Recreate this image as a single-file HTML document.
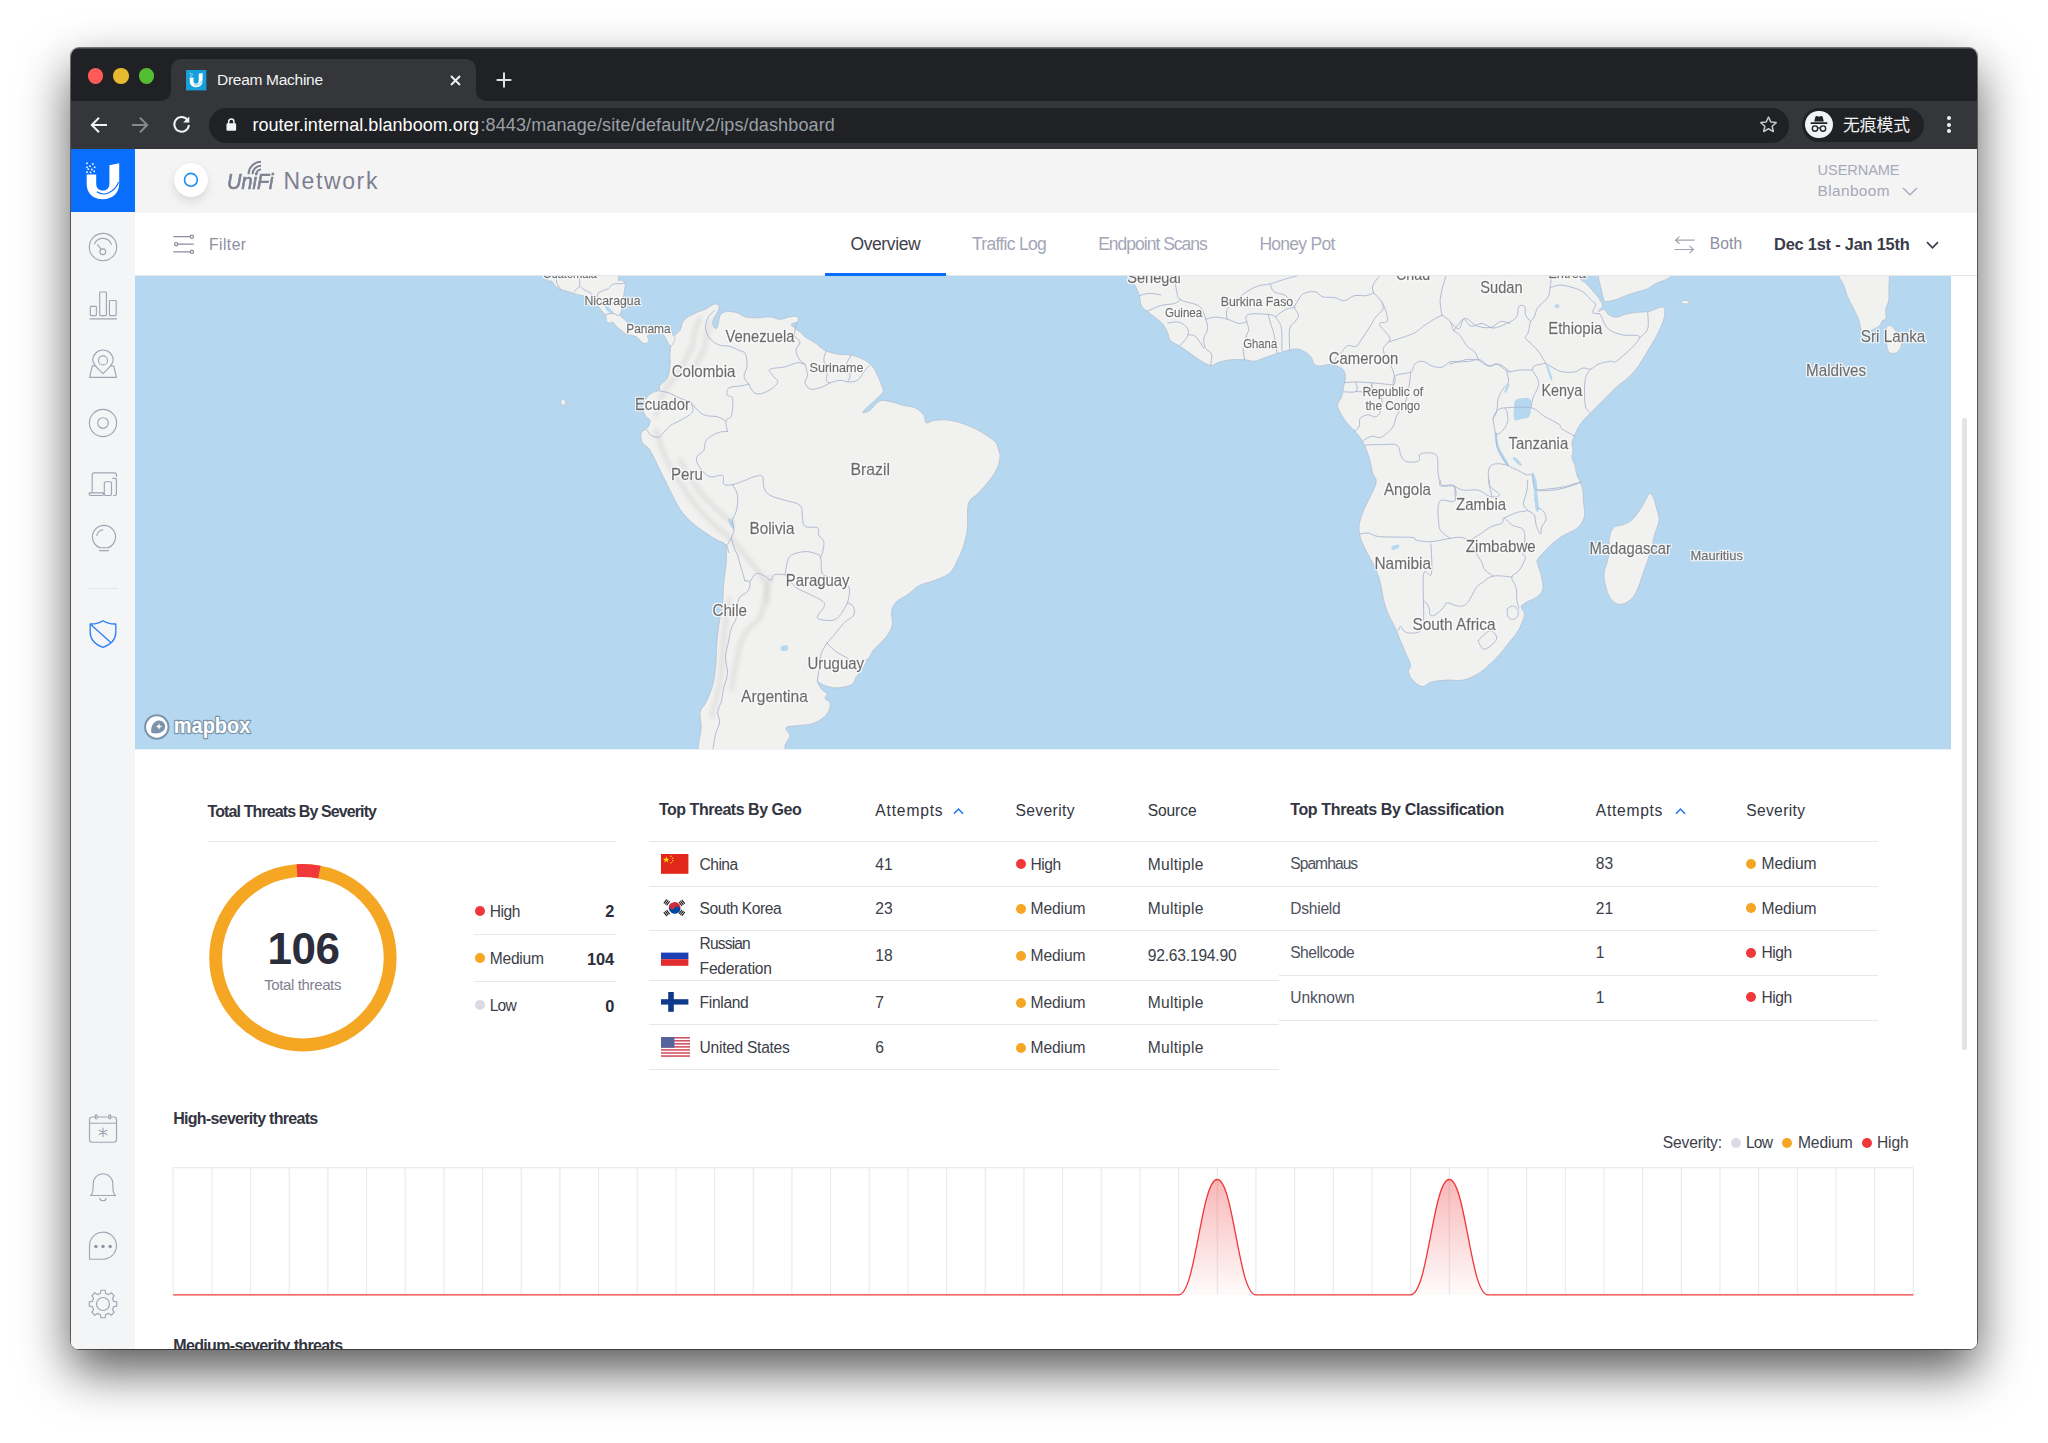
<!DOCTYPE html>
<html lang="en"><head><meta charset="utf-8"><title>Dream Machine</title>
<style>
html,body{margin:0;padding:0;}
body{width:2048px;height:1443px;background:#fff;position:relative;overflow:hidden;
 font-family:"Liberation Sans","Noto Sans CJK SC",sans-serif;}
.t{position:absolute;white-space:nowrap;line-height:1;display:block;}
#win{position:absolute;left:71px;top:47.5px;width:1906px;height:1301.5px;border-radius:8px 8px 7px 7px;
 overflow:hidden;background:#fff;}
#shadow{position:absolute;left:71px;top:47.5px;width:1906px;height:1301.5px;border-radius:8px;
 box-shadow:0 0 0 1px rgba(0,0,0,.5),0 22px 50px rgba(0,0,0,.66);}
#pg{position:absolute;left:-71px;top:-47.5px;width:2048px;height:1443px;}
svg{position:absolute;overflow:visible;}
.mf text{font-family:"Liberation Sans",sans-serif;fill:#6a6a6a;stroke:#6a6a6a;stroke-width:.35px;}
</style></head><body>
<div id="shadow"></div>
<div id="win"><div id="pg">

<div style="position:absolute;left:71.0px;top:47.5px;width:1906.0px;height:53.5px;background:#202124;"></div>
<div style="position:absolute;left:71.0px;top:101.0px;width:1906.0px;height:47.5px;background:#35363a;"></div>
<div style="position:absolute;left:71.0px;top:47.5px;width:1906.0px;height:1.4px;background:#48494c;"></div>
<div style="position:absolute;left:170.500px;top:58.500px;width:305.500px;height:43px;background:#35363a;border-radius:10px 10px 0 0;"></div>
<svg style="left:160.500px;top:91px" width="10" height="10" viewBox="0 0 10 10"><path d="M10 0 V10 H0 A10 10 0 0 0 10 0Z" fill="#35363a"/></svg>
<svg style="left:476px;top:91px" width="10" height="10" viewBox="0 0 10 10"><path d="M0 0 V10 H10 A10 10 0 0 1 0 0Z" fill="#35363a"/></svg>
<div style="position:absolute;left:87.6px;top:68.4px;width:15.6px;height:15.6px;background:#fc5b57;border-radius:50%;"></div>
<div style="position:absolute;left:113.0px;top:68.4px;width:15.6px;height:15.6px;background:#e6ba2f;border-radius:50%;"></div>
<div style="position:absolute;left:138.6px;top:68.4px;width:15.6px;height:15.6px;background:#53bd34;border-radius:50%;"></div>
<svg style="left:185.700px;top:69.800px" width="20.400" height="20.400" viewBox="0 0 64 64"><rect width="64" height="64" fill="#169fdb"/><g transform="translate(32 32) scale(1.24) translate(-32 -32.500)"><path d="M15.700 25.600V35C15.700 44.500 22.500 50.200 31.800 50.200C41.500 50.200 48.200 44 48.200 34.500V14.200L38.400 16.200V34.500C38.400 38.800 36 41.600 31.900 41.600C27.800 41.600 25.200 38.800 25.200 34.500V25.600Z" fill="#fff"/><rect x="15.700" y="14" width="2.600" height="2.600" fill="#fff"/><rect x="20.500" y="16.500" width="2.600" height="2.600" fill="#fff"/><rect x="17.500" y="20" width="2.600" height="2.600" fill="#fff"/><path d="M25.800 42.800C33 47.800 43.500 43.500 47.700 33" stroke="#169fdb" stroke-width="1.600" fill="none"/></g></svg>
<span class="t" style="left:217.0px;top:72.2px;font-size:15.5px;color:#f1f3f4;letter-spacing:-0.283px;">Dream Machine</span>
<svg style="left:449px;top:73.8px" width="13" height="13" viewBox="0 0 13 13"><path d="M2 2l9 9M11 2l-9 9" stroke="#f1f3f4" stroke-width="1.9" fill="none"/></svg>
<svg style="left:495.8px;top:72.3px" width="16" height="16" viewBox="0 0 16 16"><path d="M8 0.6v14.8M0.6 8h14.8" stroke="#dfe1e5" stroke-width="2" fill="none"/></svg>
<svg style="left:90px;top:116px" width="18" height="18" viewBox="0 0 18 18"><path d="M17 9H2.6M9 1.8L1.8 9 9 16.2" stroke="#f1f3f4" stroke-width="2" fill="none"/></svg>
<svg style="left:131px;top:116px" width="18" height="18" viewBox="0 0 18 18"><path d="M1 9h14.4M9 1.8L16.2 9 9 16.2" stroke="#86888c" stroke-width="2" fill="none"/></svg>
<svg style="left:171.5px;top:115px" width="19" height="19" viewBox="0 0 19 19"><path d="M15.6 5.2A7.3 7.3 0 1 0 16.9 10" stroke="#f1f3f4" stroke-width="2" fill="none"/><path d="M17.3 1.4v6.2h-6.2z" fill="#f1f3f4"/></svg>
<div style="position:absolute;left:209px;top:107.5px;width:1580px;height:35px;border-radius:17.5px;background:#202124;"></div>
<svg style="left:226.400px;top:118px" width="10.600" height="13.200" viewBox="0 0 12 15"><rect x="0.5" y="6" width="11" height="8.6" rx="1.3" fill="#f1f3f4"/><path d="M3 6.4V4.2a3 3 0 0 1 6 0v2.2" stroke="#f1f3f4" stroke-width="1.7" fill="none"/></svg>
<span class="t" style="left:252.4px;top:116.0px;font-size:18px;color:#fdfdfd;letter-spacing:0.054px;">router.internal.blanboom.org</span>
<span class="t" style="left:480.4px;top:116.0px;font-size:18px;color:#9aa0a6;letter-spacing:0.126px;">:8443/manage/site/default/v2/ips/dashboard</span>
<svg style="left:1758.5px;top:114.5px" width="19" height="19" viewBox="0 0 24 24"><path d="M12 2.6l2.9 6.3 6.8.7-5.1 4.6 1.5 6.7L12 17.4l-6.1 3.5 1.5-6.7-5.1-4.6 6.8-.7z" stroke="#c4c7c9" stroke-width="1.900" fill="none" stroke-linejoin="round"/></svg>
<div style="position:absolute;left:1801.5px;top:107.5px;width:122.5px;height:34px;border-radius:17px;background:#202124;"></div>
<div style="position:absolute;left:1805.4px;top:110.9px;width:27.2px;height:27.2px;background:#f1f3f4;border-radius:50%;"></div>
<svg style="left:1808px;top:114px" width="22" height="21" viewBox="0 0 22 21"><path d="M6.2 7.4l1.2-4.6c.2-.6.8-.9 1.4-.7l2.2.7 2.2-.7c.6-.2 1.2.1 1.4.7l1.2 4.6z" fill="#202124"/><rect x="2.6" y="8.3" width="16.8" height="1.6" rx=".5" fill="#202124"/><circle cx="7" cy="14.6" r="2.7" stroke="#202124" stroke-width="1.4" fill="none"/><circle cx="15" cy="14.6" r="2.7" stroke="#202124" stroke-width="1.4" fill="none"/><path d="M9.6 14.2q1.4-.9 2.8 0" stroke="#202124" stroke-width="1.2" fill="none"/></svg>
<span class="t" style="left:1843.0px;top:118.4px;font-size:16.8px;color:#f1f3f4;font-family:"Noto Sans CJK SC",sans-serif;">无痕模式</span>
<div style="position:absolute;left:1946.6px;top:116.0px;width:4.0px;height:4.0px;background:#f1f3f4;border-radius:50%;"></div>
<div style="position:absolute;left:1946.6px;top:122.5px;width:4.0px;height:4.0px;background:#f1f3f4;border-radius:50%;"></div>
<div style="position:absolute;left:1946.6px;top:129.0px;width:4.0px;height:4.0px;background:#f1f3f4;border-radius:50%;"></div>
<div style="position:absolute;left:135.0px;top:148.5px;width:1842.0px;height:64.0px;background:#f4f4f5;"></div>
<div style="position:absolute;left:71.0px;top:148.5px;width:64.0px;height:64.0px;background:#0a6efd;"></div>
<svg style="left:71px;top:148.500px" width="64" height="64" viewBox="0 0 64 64"><g fill="#fff"><path d="M15.700 25.600V35C15.700 44.500 22.500 50.200 31.800 50.200C41.500 50.200 48.200 44 48.200 34.500V14.200L38.400 16.200V34.500C38.400 38.800 36 41.600 31.900 41.600C27.800 41.600 25.200 38.800 25.200 34.500V25.600Z"/><rect x="15.2" y="13.5" width="1.600" height="1.600"/><rect x="18.2" y="16.4" width="1.600" height="1.600"/><rect x="21.0" y="14.2" width="1.600" height="1.600"/><rect x="22.8" y="17.5" width="1.600" height="1.600"/><rect x="20.0" y="19.7" width="1.600" height="1.600"/><rect x="16.5" y="19.4" width="1.600" height="1.600"/><rect x="22.4" y="21.5" width="1.600" height="1.600"/><rect x="18.7" y="22.6" width="1.600" height="1.600"/><rect x="15.2" y="22.4" width="1.600" height="1.600"/><rect x="15.2" y="17.5" width="1.600" height="1.600"/></g><path d="M25.800 42.800C33 47.800 43.500 43.500 47.700 33" stroke="#0a6efd" stroke-width="1.100" fill="none"/></svg>
<div style="position:absolute;left:173.6px;top:162.6px;width:34px;height:34px;border-radius:50%;background:#fff;box-shadow:0 5px 10px rgba(0,0,0,.10),0 0 2px rgba(0,0,0,.06);"></div>
<svg style="left:180px;top:169px" width="24" height="24" viewBox="180 169 24 24"><circle cx="190.900" cy="179.800" r="6.400" fill="none" stroke="#1c8df2" stroke-width="1.600"/></svg>
<span class="t" style="left:226.8px;top:170.5px;font-size:22.6px;color:#7d8090;font-style:italic;-webkit-text-stroke:.7px #7d8090;transform-origin:0 0;transform:scaleX(0.8817);">UniFi</span>
<svg style="left:244px;top:158px" width="22" height="20" viewBox="244 158 22 20"><g stroke="#7d8090" stroke-width="2" fill="none"><path d="M248.600 174.200A12.400 12.400 0 0 1 261 161.800"/><path d="M252.500 174.200A8.500 8.500 0 0 1 261 165.700"/><path d="M256.300 174.200A4.700 4.700 0 0 1 261 169.500"/></g></svg>
<span class="t" style="left:283.4px;top:170.1px;font-size:23px;color:#7d8090;letter-spacing:1.608px;">Network</span>
<span class="t" style="left:1817.6px;top:162.8px;font-size:14.6px;color:#a6a9b8;letter-spacing:-0.107px;">USERNAME</span>
<span class="t" style="left:1817.6px;top:182.7px;font-size:15.4px;color:#a6a9b8;letter-spacing:0.379px;">Blanboom</span>
<svg style="left:1901.500px;top:186.800px" width="16" height="9" viewBox="0 0 16 9"><path d="M1 1l7 6.800L15 1" stroke="#a6a9b8" stroke-width="1.300" fill="none"/></svg>
<div style="position:absolute;left:71.0px;top:212.3px;width:64.0px;height:1136.7px;background:#f4f5f6;"></div>
<div style="position:absolute;left:135.0px;top:212.5px;width:1842.0px;height:63.1px;background:#ffffff;"></div>
<div style="position:absolute;left:135.0px;top:274.8px;width:1842.0px;height:1.0px;background:#e4e5ea;"></div>
<svg style="left:170px;top:230px" width="28" height="28" viewBox="170 230 28 28"><g stroke="#8b8e9e" stroke-width="1.250" fill="none"><path d="M173.300 236.700h17M173.300 251.800h17M177.800 244.200h16"/><circle cx="191.900" cy="236.700" r="1.600"/><circle cx="176.200" cy="244.200" r="1.600"/><circle cx="191.900" cy="251.800" r="1.600"/></g></svg>
<span class="t" style="left:209.0px;top:236.8px;font-size:15.6px;color:#8b8e9e;letter-spacing:0.467px;">Filter</span>
<span class="t" style="left:850.4px;top:236.2px;font-size:17.5px;color:#3f414c;letter-spacing:-0.376px;">Overview</span>
<span class="t" style="left:972.0px;top:236.2px;font-size:17.5px;color:#a3a6b6;letter-spacing:-0.701px;">Traffic Log</span>
<span class="t" style="left:1098.2px;top:236.2px;font-size:17.5px;color:#a3a6b6;letter-spacing:-0.999px;">Endpoint Scans</span>
<span class="t" style="left:1259.4px;top:236.2px;font-size:17.5px;color:#a3a6b6;letter-spacing:-0.727px;">Honey Pot</span>
<div style="position:absolute;left:824.9px;top:272.8px;width:121.6px;height:3.0px;background:#0a6efd;"></div>
<svg style="left:1673.500px;top:235.500px" width="21" height="18" viewBox="0 0 21 18"><g stroke="#a0a3b2" stroke-width="1.200" fill="none"><path d="M20.500 4.200H1.500M5.500 0.600L1.500 4.200 5.500 7.800"/><path d="M0.500 13.500h19M15.500 9.900l4 3.600-4 3.600"/></g></svg>
<span class="t" style="left:1709.7px;top:235.9px;font-size:15.6px;color:#8b8e9e;letter-spacing:0.103px;">Both</span>
<span class="t" style="left:1774.1px;top:236.1px;font-size:16.4px;color:#3a3c4a;font-weight:700;letter-spacing:-0.221px;">Dec 1st - Jan 15th</span>
<svg style="left:1925.900px;top:240.500px" width="13" height="8.500" viewBox="0 0 13 8.500"><path d="M1 1.200l5.500 5.600L12 1.200" stroke="#3a3c4a" stroke-width="1.700" fill="none"/></svg>
<svg style="left:135px;top:275.7px" width="1816" height="473.3" viewBox="135 275.7 1816 473.3">
<defs><clipPath id="mc"><rect x="135" y="275.7" width="1816" height="473.3"/></clipPath></defs>
<rect x="135" y="275.7" width="1816" height="473.3" fill="#b5d8f0"/>
<g clip-path="url(#mc)">
<g fill="#f1f1f0" stroke="#b4c0d1" stroke-width="0.8" stroke-linejoin="round">
<path d="M672.5 338.0C674.3 333.9 678.0 333.2 680.0 330.0C682.0 326.8 681.0 323.1 683.8 320.0C686.5 316.9 691.2 315.0 695.0 313.0C698.8 311.0 701.6 310.6 705.0 309.0C708.4 307.4 711.3 304.7 713.8 304.0C716.2 303.3 718.0 303.7 718.8 305.0C719.5 306.3 718.8 309.1 718.0 311.2C717.2 313.4 715.2 314.9 714.2 317.0C713.3 319.1 712.6 321.0 712.8 323.0C712.9 325.0 714.1 327.6 715.0 328.2C715.9 328.9 716.8 328.0 717.5 326.5C718.2 325.0 718.2 322.2 718.8 320.0C719.3 317.8 719.2 315.6 720.8 314.0C722.3 312.4 724.5 311.5 727.5 311.2C730.5 311.0 734.4 311.6 737.5 312.5C740.6 313.4 741.4 315.6 745.0 316.5C748.6 317.4 753.0 317.5 757.5 317.5C762.0 317.5 766.0 316.2 770.0 316.5C774.0 316.8 776.4 319.0 780.0 319.0C783.6 319.0 786.9 316.9 790.0 316.5C793.1 316.1 796.1 315.6 797.5 316.5C798.9 317.4 798.6 320.1 797.5 321.5C796.4 322.9 791.5 322.6 791.2 324.0C791.0 325.4 794.5 327.5 796.2 329.0C798.0 330.5 799.7 331.1 801.2 332.5C802.8 333.9 802.5 334.7 805.0 336.5C807.5 338.3 811.4 340.1 815.0 342.5C818.6 344.9 821.0 348.0 825.0 350.0C829.0 352.0 832.5 352.9 837.5 353.8C842.5 354.6 847.5 353.9 852.5 355.0C857.5 356.1 861.4 358.0 865.0 360.0C868.6 362.0 870.2 363.6 872.5 366.2C874.8 368.9 875.7 371.2 877.5 375.0C879.3 378.8 881.6 384.4 882.5 387.5C883.4 390.6 883.9 390.2 882.5 392.5C881.1 394.8 878.5 396.6 875.0 400.0C871.5 403.4 863.9 409.7 863.0 411.5C862.1 413.3 866.9 412.0 870.0 410.0C873.1 408.0 875.5 401.9 880.0 400.5C884.5 399.1 891.0 401.7 895.0 402.5C899.0 403.3 898.9 404.1 902.5 405.0C906.1 405.9 911.2 405.7 915.0 407.5C918.8 409.3 921.7 412.3 923.8 415.0C925.8 417.7 924.2 421.6 926.2 422.5C928.3 423.4 930.7 420.4 935.0 420.0C939.3 419.6 944.1 419.1 950.0 420.0C955.9 420.9 961.6 422.8 967.5 425.0C973.4 427.2 977.5 429.5 982.5 432.5C987.5 435.5 992.1 438.4 995.0 441.5C997.9 444.6 997.9 447.1 998.8 450.0C999.6 452.9 1000.5 453.9 1000.0 457.5C999.5 461.1 998.5 465.5 996.2 470.0C994.0 474.5 990.9 478.2 987.5 482.5C984.1 486.8 980.6 490.6 977.5 493.8C974.4 496.9 971.8 497.1 970.0 500.0C968.2 502.9 968.0 505.1 967.5 510.0C967.0 515.0 968.2 521.2 967.5 527.5C966.8 533.8 965.5 539.1 963.8 545.0C962.0 550.9 960.0 555.0 957.5 560.0C955.0 565.0 954.0 568.9 950.0 572.5C946.0 576.1 940.4 577.8 935.0 580.0C929.6 582.2 924.5 582.8 920.0 585.0C915.5 587.2 912.3 590.8 910.0 592.5C907.7 594.2 909.7 592.9 907.1 594.7C904.5 596.5 898.2 599.3 895.4 602.5C892.6 605.7 892.0 608.8 891.5 612.3C891.0 615.8 892.8 618.5 892.5 622.0C892.1 625.5 891.5 628.3 889.5 631.8C887.6 635.3 884.5 638.4 881.7 641.6C878.9 644.7 876.4 646.2 873.9 649.4C871.4 652.5 870.2 655.6 868.0 659.1C865.9 662.7 864.3 665.7 862.2 668.9C860.1 672.1 858.3 673.9 856.3 676.7C854.4 679.5 854.6 682.6 851.4 684.5C848.3 686.5 842.8 687.1 838.8 687.5C834.7 687.8 832.1 687.2 829.0 686.5C825.8 685.8 823.3 684.6 821.2 683.6C819.1 682.5 817.3 679.7 817.3 680.6C817.3 681.5 819.4 686.2 821.2 688.4C822.9 690.7 826.3 691.6 827.0 693.3C827.7 695.1 824.6 696.6 825.1 698.2C825.6 699.8 829.3 700.0 830.0 702.1C830.7 704.2 830.2 707.1 829.0 709.9C827.8 712.7 826.3 715.3 823.1 717.7C820.0 720.2 816.3 722.2 811.4 723.6C806.5 725.0 800.4 724.8 795.8 725.5C791.2 726.2 787.1 725.7 786.0 727.5C785.0 729.3 789.9 732.5 789.9 735.3C789.9 738.1 786.9 740.5 786.0 743.1C785.1 745.8 785.2 740.8 785.0 750.0C784.9 759.1 800.7 786.0 785.0 793.9C769.4 801.8 713.8 801.8 698.1 793.9C682.5 786.0 697.6 761.9 698.1 750.0C698.7 738.0 700.7 734.4 701.1 727.5C701.4 720.6 699.2 716.4 700.1 711.9C701.0 707.3 703.7 707.0 705.9 702.1C708.2 697.2 711.0 691.2 712.8 684.5C714.5 677.9 715.0 672.0 715.7 665.0C716.4 658.0 716.2 652.5 716.7 645.5C717.2 638.4 717.6 633.3 718.6 625.9C719.7 618.6 721.7 611.8 722.5 604.5C723.4 597.1 722.8 593.0 723.5 584.9C724.2 576.8 726.0 566.9 726.4 559.5C726.9 552.1 725.4 545.2 725.9 543.9C726.3 542.6 728.9 552.5 728.8 552.5C728.6 552.5 727.0 546.0 725.0 543.8C723.0 541.5 720.6 541.8 717.5 540.0C714.4 538.2 711.5 536.5 707.5 533.8C703.5 531.0 699.5 528.8 695.0 525.0C690.5 521.2 686.1 517.0 682.5 512.5C678.9 508.0 677.7 504.9 675.0 500.0C672.3 495.1 670.4 490.9 667.5 485.0C664.6 479.1 661.9 473.8 658.8 467.5C655.6 461.2 652.9 454.5 650.0 450.0C647.1 445.5 644.1 445.6 642.5 442.5C640.9 439.4 640.4 435.2 641.2 432.5C642.1 429.8 645.9 429.8 647.5 427.5C649.1 425.2 650.5 422.2 650.0 420.0C649.5 417.8 646.4 417.7 645.0 415.0C643.6 412.3 641.6 408.8 642.5 405.0C643.4 401.2 647.1 396.4 650.0 393.8C652.9 391.1 657.0 391.6 658.8 390.0C660.5 388.4 658.4 387.2 660.0 385.0C661.6 382.8 665.7 381.1 667.5 377.5C669.3 373.9 669.5 369.5 670.0 365.0C670.5 360.5 669.5 357.4 670.0 352.5C670.5 347.6 670.7 342.1 672.5 338.0Z"/>
<path d="M547.3 227.0C560.0 218.3 605.4 218.3 618.2 227.0C630.9 235.8 617.6 266.1 618.2 275.6C618.7 285.1 620.1 278.4 621.4 279.7C622.6 281.0 624.6 281.2 625.1 282.9C625.7 284.6 624.9 286.8 624.6 289.3C624.3 291.8 623.9 294.0 623.5 296.9C623.1 299.8 622.9 302.8 622.5 305.4C622.0 308.1 621.6 309.6 621.2 311.4C620.8 313.1 619.9 313.9 620.3 315.1C620.7 316.4 622.4 317.2 623.5 318.3C624.7 319.5 625.2 320.3 626.8 321.6C628.3 322.8 629.8 324.2 632.1 325.3C634.5 326.5 636.7 327.4 639.6 328.0C642.6 328.6 645.1 328.7 648.2 328.7C651.3 328.7 653.9 327.9 656.8 328.0C659.7 328.1 661.8 328.4 664.4 329.1C666.9 329.8 669.2 330.6 670.8 331.8C672.4 332.9 672.8 334.3 673.5 335.5C674.2 336.8 675.2 337.0 674.9 338.8C674.6 340.5 672.9 344.2 671.9 345.2C670.9 346.2 670.2 345.1 669.2 344.1C668.2 343.2 667.4 341.3 666.5 339.8C665.6 338.3 665.3 336.9 664.4 335.7C663.4 334.6 662.9 334.1 661.1 333.6C659.4 333.1 656.6 333.0 654.7 333.2C652.8 333.3 651.7 333.8 650.4 334.2C649.0 334.7 647.5 334.8 647.2 335.7C646.9 336.7 648.7 338.1 648.8 339.3C648.9 340.4 648.6 341.5 647.7 342.2C646.8 342.9 645.4 343.7 643.9 343.3C642.5 342.8 641.0 341.0 639.6 339.8C638.3 338.6 638.0 337.5 636.4 336.6C634.9 335.7 633.0 335.5 631.1 335.0C629.1 334.4 627.4 334.5 625.7 333.6C623.9 332.7 623.1 331.5 621.4 330.2C619.6 328.8 617.6 327.4 616.0 325.9C614.5 324.4 614.0 322.3 612.8 321.8C611.6 321.2 610.7 323.1 609.6 322.9C608.4 322.6 607.0 321.8 606.3 320.5C605.7 319.2 606.6 317.4 605.8 315.7C605.0 313.9 603.7 312.9 602.1 310.8C600.4 308.8 598.6 306.5 596.7 304.4C594.7 302.2 593.4 300.6 591.3 299.0C589.2 297.5 587.0 296.5 584.9 295.8C582.7 295.0 581.4 295.4 579.5 294.9C577.6 294.4 576.1 293.7 574.1 293.1C572.2 292.5 571.1 292.2 568.8 291.5C566.4 290.8 563.6 290.3 561.2 289.3C558.9 288.4 557.6 287.7 555.9 286.1C554.1 284.6 553.1 282.6 551.6 280.7C550.0 278.8 548.0 285.3 547.3 275.6C546.5 265.9 534.5 235.8 547.3 227.0Z"/>
<path d="M561.0 400.5C561.5 399.6 563.2 398.7 564.0 399.0C564.8 399.3 565.5 400.9 565.5 402.0C565.5 403.1 564.5 404.6 563.8 405.0C563.0 405.4 562.0 404.8 561.5 404.0C561.0 403.2 560.5 401.4 561.0 400.5Z"/>
<path d="M569.0 403.5C569.2 403.1 570.3 402.7 570.8 403.0C571.2 403.3 571.5 404.6 571.2 405.0C571.0 405.4 569.9 405.8 569.5 405.5C569.1 405.2 568.8 403.9 569.0 403.5Z"/>
<path d="M1128.8 250.5C1048.0 255.0 1128.3 269.1 1129.5 275.5C1130.7 281.8 1133.6 282.0 1135.4 285.6C1137.1 289.2 1138.2 291.9 1139.3 295.4C1140.4 298.9 1139.8 302.3 1141.2 305.2C1142.7 308.0 1144.6 308.9 1147.1 311.0C1149.6 313.1 1152.1 314.6 1154.9 316.9C1157.7 319.2 1160.4 320.9 1162.7 323.7C1165.0 326.5 1166.2 329.5 1167.6 332.5C1169.0 335.5 1168.3 337.9 1170.5 340.3C1172.8 342.8 1176.8 343.9 1180.3 346.2C1183.8 348.5 1186.6 350.5 1190.1 353.0C1193.6 355.5 1196.2 357.7 1199.8 359.8C1203.5 362.0 1207.1 364.8 1210.6 365.1C1214.1 365.5 1215.7 362.8 1219.4 361.8C1223.1 360.8 1226.5 359.9 1231.1 359.5C1235.7 359.0 1240.5 359.2 1244.8 359.5C1249.0 359.7 1250.7 361.3 1254.5 360.8C1258.4 360.4 1262.0 358.3 1266.2 356.9C1270.5 355.5 1274.1 354.2 1278.0 353.0C1281.8 351.8 1284.2 350.9 1287.7 350.1C1291.2 349.3 1294.3 348.4 1297.5 348.7C1300.7 349.1 1302.9 350.6 1305.3 352.0C1307.8 353.5 1309.6 354.8 1311.2 356.9C1312.8 359.0 1312.5 362.2 1314.1 363.8C1315.7 365.3 1317.3 365.6 1320.0 365.7C1322.6 365.8 1325.8 364.3 1328.8 364.3C1331.7 364.3 1333.9 364.8 1336.6 365.7C1339.2 366.7 1341.8 367.5 1343.4 369.6C1345.0 371.7 1345.4 374.3 1345.4 377.4C1345.4 380.6 1344.1 383.7 1343.4 387.2C1342.7 390.7 1342.5 393.8 1341.4 397.0C1340.4 400.1 1337.5 401.6 1337.5 404.8C1337.5 407.9 1339.5 411.0 1341.4 414.5C1343.4 418.0 1345.6 421.1 1348.3 424.3C1350.9 427.5 1353.6 429.3 1356.1 432.1C1358.6 434.9 1360.4 437.5 1362.0 439.9C1363.5 442.4 1363.8 443.3 1364.9 445.8C1365.9 448.2 1366.8 450.4 1367.8 453.6C1368.9 456.8 1369.9 459.8 1370.7 463.4C1371.6 466.9 1371.7 470.1 1372.7 473.1C1373.7 476.1 1376.1 476.8 1376.2 480.0C1376.2 483.2 1374.7 486.5 1373.0 490.7C1371.2 495.0 1368.7 499.0 1366.5 503.6C1364.4 508.3 1362.5 511.9 1361.2 516.5C1359.8 521.2 1358.8 524.8 1359.0 529.4C1359.2 534.1 1360.3 537.3 1362.2 542.3C1364.2 547.3 1367.2 552.3 1369.7 557.3C1372.3 562.4 1374.3 565.6 1376.2 570.2C1378.1 574.9 1379.1 577.7 1380.5 583.1C1381.8 588.5 1382.4 594.9 1383.7 600.3C1385.1 605.7 1386.1 608.6 1388.0 613.2C1389.9 617.8 1392.3 621.5 1394.5 626.1C1396.6 630.7 1397.9 634.3 1399.8 639.0C1401.8 643.6 1403.3 647.2 1405.2 651.9C1407.1 656.5 1410.0 661.3 1410.6 664.8C1411.1 668.2 1408.0 668.5 1408.4 671.2C1408.8 673.9 1410.2 677.1 1412.7 679.8C1415.2 682.5 1419.1 685.9 1422.4 686.3C1425.7 686.6 1426.7 683.1 1431.0 682.0C1435.2 680.8 1440.2 680.2 1446.0 679.8C1451.8 679.4 1457.4 681.0 1463.2 679.8C1469.0 678.6 1473.6 676.1 1478.2 673.4C1482.9 670.7 1485.1 668.2 1489.0 664.8C1492.9 661.3 1496.2 657.9 1499.7 654.0C1503.2 650.2 1505.2 647.2 1508.3 643.3C1511.4 639.4 1514.4 636.4 1516.9 632.5C1519.4 628.7 1520.9 625.3 1522.3 621.8C1523.6 618.3 1524.6 615.9 1524.4 613.2C1524.2 610.5 1521.0 608.7 1521.2 606.8C1521.4 604.8 1522.8 604.2 1525.5 602.5C1528.2 600.7 1533.2 599.4 1536.3 597.1C1539.3 594.8 1541.7 593.2 1542.7 589.6C1543.7 585.9 1542.4 580.9 1541.6 576.7C1540.8 572.4 1539.2 569.0 1538.4 565.9C1537.6 562.8 1536.2 562.2 1537.3 559.5C1538.5 556.8 1541.9 554.0 1544.8 550.9C1547.7 547.8 1550.0 545.2 1553.4 542.3C1556.9 539.4 1560.3 537.1 1564.2 534.8C1568.0 532.5 1571.8 531.5 1574.9 529.4C1578.0 527.3 1579.6 525.7 1581.4 523.0C1583.1 520.3 1584.2 518.2 1584.6 514.4C1585.0 510.5 1583.8 505.7 1583.5 501.5C1583.2 497.2 1583.3 494.1 1582.8 490.7C1582.3 487.4 1581.9 485.7 1580.9 482.9C1579.8 480.1 1578.0 478.2 1577.0 475.1C1575.9 471.9 1575.9 468.5 1575.0 465.3C1574.1 462.1 1572.4 460.3 1572.1 457.5C1571.7 454.7 1573.0 452.5 1573.0 449.7C1573.0 446.9 1571.7 444.7 1572.1 441.9C1572.4 439.1 1573.8 436.9 1575.0 434.1C1576.2 431.2 1577.1 429.1 1578.9 426.2C1580.7 423.4 1582.7 420.9 1584.8 418.4C1586.9 416.0 1588.2 415.0 1590.6 412.6C1593.1 410.1 1595.6 407.6 1598.4 404.8C1601.2 402.0 1603.1 400.1 1606.2 397.0C1609.4 393.8 1612.5 390.4 1616.0 387.2C1619.5 384.0 1622.3 382.5 1625.8 379.4C1629.3 376.2 1632.4 373.5 1635.5 369.6C1638.7 365.7 1640.9 361.8 1643.4 357.9C1645.8 354.0 1647.1 351.6 1649.2 348.1C1651.3 344.6 1653.1 341.9 1655.1 338.4C1657.0 334.8 1658.4 332.1 1660.0 328.6C1661.5 325.1 1663.0 322.0 1663.9 318.8C1664.7 315.7 1665.0 313.2 1664.8 311.0C1664.7 308.8 1664.3 307.2 1662.9 306.7C1661.5 306.2 1659.5 307.3 1657.0 308.1C1654.6 308.9 1652.7 310.3 1649.2 311.0C1645.7 311.7 1641.7 311.5 1637.5 312.0C1633.3 312.5 1629.6 313.1 1625.8 313.9C1621.9 314.8 1619.2 316.9 1616.0 316.9C1612.9 316.9 1610.3 315.4 1608.2 313.9C1606.1 312.5 1606.1 309.6 1604.3 309.1C1602.5 308.5 1598.8 311.5 1598.4 311.0C1598.1 310.5 1602.0 308.1 1602.3 306.1C1602.7 304.2 1601.8 302.7 1600.4 300.3C1599.0 297.8 1597.0 295.4 1594.5 292.5C1592.1 289.5 1589.5 286.7 1586.7 283.7C1583.9 280.6 1580.5 281.4 1578.9 275.5C1577.3 269.5 1659.0 255.0 1577.9 250.5C1496.9 246.0 1209.5 246.0 1128.8 250.5Z"/>
<path d="M1597.5 250.5C1579.9 255.0 1597.9 269.1 1598.4 275.5C1599.0 281.8 1599.5 281.7 1600.4 285.6C1601.3 289.6 1602.4 294.5 1603.3 297.3C1604.2 300.2 1603.0 300.9 1605.3 301.2C1607.6 301.6 1612.3 300.4 1616.0 299.3C1619.7 298.2 1621.9 296.8 1625.8 295.4C1629.6 294.0 1633.6 292.7 1637.5 291.5C1641.4 290.3 1644.1 290.0 1647.3 288.6C1650.4 287.1 1651.9 285.3 1655.1 283.7C1658.2 282.1 1661.7 281.2 1664.8 279.8C1668.0 278.3 1667.0 278.3 1672.7 275.5C1678.3 272.7 1691.9 268.6 1696.1 264.1C1700.3 259.6 1713.8 252.9 1696.1 250.5C1678.3 248.0 1615.0 246.0 1597.5 250.5Z"/>
<path d="M1681.4 301.2C1681.9 300.7 1683.8 300.1 1685.4 300.1C1686.9 300.1 1689.7 300.6 1689.8 301.2C1690.0 301.9 1687.6 303.2 1686.3 303.6C1685.1 303.9 1683.7 303.6 1682.8 303.2C1681.9 302.8 1681.0 301.8 1681.4 301.2Z"/>
<path d="M1649.5 493.3C1651.0 492.5 1652.1 494.6 1653.3 497.2C1654.6 499.8 1655.5 503.9 1656.6 507.9C1657.6 512.0 1659.3 515.5 1659.1 519.7C1659.0 524.0 1656.7 527.1 1655.5 531.6C1654.3 536.0 1653.6 539.4 1652.3 544.5C1650.9 549.5 1649.7 554.1 1648.0 559.5C1646.2 564.9 1644.5 569.1 1642.6 574.5C1640.7 579.9 1639.4 585.1 1637.2 589.6C1635.1 594.0 1633.9 596.6 1630.8 599.2C1627.7 601.9 1623.5 604.2 1620.0 604.2C1616.6 604.2 1613.8 601.9 1611.4 599.2C1609.1 596.6 1608.1 594.0 1606.7 589.6C1605.4 585.1 1603.9 579.6 1603.9 574.5C1604.0 569.5 1606.2 565.9 1607.2 561.6C1608.1 557.4 1608.9 555.2 1609.3 550.9C1609.7 546.6 1608.5 542.3 1609.3 538.0C1610.1 533.8 1610.9 529.8 1613.6 527.3C1616.3 524.8 1620.9 525.6 1624.3 524.0C1627.8 522.5 1630.2 521.2 1632.9 518.7C1635.6 516.2 1637.3 513.2 1639.4 510.1C1641.5 507.0 1642.9 504.5 1644.7 501.5C1646.6 498.5 1647.9 494.1 1649.5 493.3Z"/>
<path d="M1833.8 260.6C1824.6 263.3 1836.7 271.1 1838.5 275.5C1840.3 279.9 1842.2 281.6 1843.8 285.2C1845.3 288.9 1845.8 292.2 1847.3 295.8C1848.7 299.4 1850.3 301.8 1852.0 305.2C1853.6 308.5 1855.3 311.4 1856.6 314.5C1858.0 317.7 1858.7 320.0 1859.6 322.7C1860.4 325.5 1860.0 328.3 1861.3 329.8C1862.7 331.2 1864.9 331.1 1867.2 330.9C1869.5 330.7 1871.9 329.6 1874.2 328.6C1876.5 327.5 1878.6 326.6 1880.1 325.1C1881.6 323.6 1881.4 321.7 1882.4 320.4C1883.5 319.1 1885.3 320.2 1885.9 318.0C1886.6 315.9 1885.4 312.0 1885.9 308.7C1886.5 305.3 1888.3 303.1 1888.9 299.3C1889.4 295.5 1888.8 291.9 1888.9 287.6C1889.0 283.3 1889.3 280.4 1889.5 275.5C1889.6 270.7 1899.7 263.3 1889.7 260.6C1879.7 257.9 1843.0 257.9 1833.8 260.6Z"/>
<path d="M1888.3 325.1C1889.3 324.9 1890.9 325.0 1892.4 326.3C1893.9 327.5 1895.0 329.6 1896.5 332.1C1898.0 334.6 1899.7 337.8 1900.6 340.3C1901.4 342.8 1901.7 344.2 1901.2 346.2C1900.6 348.2 1899.2 350.2 1897.7 351.4C1896.1 352.7 1894.1 353.3 1892.4 353.2C1890.7 353.1 1889.3 352.8 1888.3 350.9C1887.2 349.0 1886.9 345.8 1886.5 342.7C1886.1 339.5 1885.9 336.0 1885.9 333.3C1885.9 330.5 1886.1 328.9 1886.5 327.4C1886.9 325.9 1887.2 325.3 1888.3 325.1Z"/>
</g>
<g fill="#b5d8f0" stroke="none">
<path d="M1515.4 399.9C1516.9 398.3 1519.6 398.1 1522.3 397.9C1524.9 397.8 1528.5 397.3 1530.1 398.9C1531.7 400.5 1531.2 403.6 1531.1 406.7C1530.9 409.9 1530.7 414.4 1529.1 416.5C1527.5 418.6 1524.9 417.9 1522.3 418.4C1519.6 419.0 1515.9 421.5 1514.5 419.4C1513.0 417.3 1513.9 410.2 1514.1 406.7C1514.2 403.2 1514.0 401.5 1515.4 399.9Z"/>
<path d="M1555.1 304.4C1555.6 303.8 1557.9 303.9 1558.6 304.4C1559.3 304.9 1559.5 306.5 1559.0 307.1C1558.4 307.7 1556.2 308.0 1555.5 307.5C1554.8 307.0 1554.5 304.9 1555.1 304.4Z"/>
<path d="M1546.1 365.7C1545.6 363.2 1546.9 363.5 1548.0 365.7C1549.2 367.9 1551.9 375.4 1552.3 377.8C1552.8 380.3 1551.9 381.6 1550.8 379.4C1549.7 377.2 1546.6 368.2 1546.1 365.7Z"/>
<path d="M1494.5 433.3C1494.5 430.5 1495.6 430.1 1496.5 432.5C1497.3 434.9 1497.6 442.1 1499.2 446.8C1500.9 451.4 1503.9 455.3 1505.7 458.5C1507.4 461.7 1508.7 463.2 1509.0 464.5C1509.3 465.8 1508.5 466.6 1507.4 465.7C1506.3 464.8 1504.6 462.7 1502.7 459.5C1500.8 456.2 1498.4 452.4 1496.9 447.7C1495.4 443.0 1494.6 436.0 1494.5 433.3Z"/>
<path d="M1531.6 474.3C1531.6 471.6 1533.4 471.3 1534.4 473.9C1535.4 476.5 1536.8 484.0 1537.1 488.8C1537.4 493.5 1536.5 498.0 1535.9 500.1C1535.4 502.1 1534.2 502.1 1534.0 500.1C1533.8 498.0 1535.2 493.4 1534.8 488.8C1534.3 484.1 1531.7 477.0 1531.6 474.3Z"/>
<path d="M1532.8 480.0C1533.1 477.3 1535.4 477.7 1536.3 480.0C1537.1 482.3 1537.1 487.6 1537.5 492.9C1538.0 498.2 1539.1 506.2 1538.8 509.2C1538.5 512.2 1536.6 512.2 1535.8 509.6C1535.0 507.1 1535.1 500.4 1534.5 495.0C1534.0 489.7 1532.5 482.7 1532.8 480.0Z"/>
<path d="M1512.9 458.5C1512.1 457.1 1514.1 456.6 1515.6 457.5C1517.2 458.4 1520.7 462.3 1521.5 463.8C1522.3 465.2 1521.5 466.3 1519.9 465.3C1518.4 464.4 1513.7 459.9 1512.9 458.5Z"/>
<path d="M728.0 519.5C727.9 517.9 730.3 517.7 731.5 519.0C732.7 520.3 734.4 524.9 734.5 526.5C734.6 528.1 733.2 529.3 732.0 528.0C730.8 526.7 728.1 521.1 728.0 519.5Z"/>
<path d="M780.9 646.4C781.9 645.5 786.0 644.5 787.2 645.1C788.4 645.7 788.5 648.8 787.6 649.8C786.7 650.8 783.3 651.1 782.1 650.5C780.9 649.9 780.0 647.4 780.9 646.4Z"/>
<path d="M1391.9 546.2C1392.9 545.2 1397.1 544.2 1398.3 544.5C1399.6 544.7 1399.8 546.5 1398.8 547.5C1397.7 548.4 1394.0 549.8 1392.7 549.6C1391.5 549.4 1390.9 547.1 1391.9 546.2Z"/>
<path d="M604.7 306.5C604.7 305.6 605.9 305.0 607.4 305.9C608.9 306.8 612.2 310.2 613.0 311.5C613.8 312.8 612.7 313.3 611.7 313.2C610.7 313.1 608.7 312.0 607.4 310.8C606.2 309.6 604.7 307.4 604.7 306.5Z"/>
<path d="M1507.8 383.7C1508.7 382.5 1509.9 383.0 1509.6 384.5C1509.3 385.9 1507.2 390.7 1506.2 391.9C1505.3 393.0 1504.2 392.4 1504.5 390.9C1504.8 389.4 1506.9 384.8 1507.8 383.7Z"/>
</g>
<defs><filter id="hb" x="-20%" y="-20%" width="140%" height="140%"><feGaussianBlur stdDeviation="2.1"/></filter></defs>
<g fill="none" stroke="#c9c9c9" stroke-width="4.600" stroke-opacity=".42" filter="url(#hb)" stroke-linecap="round">
<path d="M700.0 317.5C699.1 319.8 696.4 325.1 695.0 330.0C693.6 334.9 694.3 339.6 692.5 345.0C690.7 350.4 687.9 354.6 685.0 360.0C682.1 365.4 679.6 370.1 676.2 375.0C672.9 379.9 669.2 383.0 666.2 387.5C663.3 392.0 661.8 395.1 660.0 400.0C658.2 404.9 656.9 412.3 656.2 415.0"/>
<path d="M710.0 322.5C709.3 325.2 707.4 332.6 706.2 337.5C705.1 342.4 705.8 345.1 703.8 350.0C701.7 354.9 696.6 362.3 695.0 365.0"/>
<path d="M656.2 430.0C657.4 433.6 659.6 442.8 662.5 450.0C665.4 457.2 668.5 462.8 672.5 470.0C676.5 477.2 680.0 482.8 685.0 490.0C690.0 497.2 694.1 503.2 700.0 510.0C705.9 516.8 711.6 522.1 717.5 527.5C723.4 532.9 727.5 535.0 732.5 540.0C737.5 545.0 740.5 549.6 745.0 555.0C749.5 560.4 753.7 564.6 757.5 570.0C761.3 575.4 764.5 579.1 766.2 585.0C768.0 590.9 767.3 599.4 767.5 602.5"/>
<path d="M680.0 460.0C682.7 464.5 688.7 476.4 695.0 485.0C701.3 493.6 708.2 500.8 715.0 507.5C721.8 514.2 729.4 519.8 732.5 522.5"/>
<path d="M770.4 577.1C769.7 579.6 767.7 585.9 766.5 590.8C765.3 595.7 764.8 599.5 763.6 604.5C762.3 609.4 762.3 613.9 759.6 618.1C757.0 622.3 752.2 623.7 748.9 627.9C745.6 632.1 743.2 636.3 741.1 641.6C739.0 646.8 738.4 651.6 737.2 657.2C736.0 662.8 735.3 667.2 734.3 672.8C733.2 678.4 731.9 685.6 731.3 688.4"/>
<path d="M729.4 598.6C728.7 602.8 726.7 612.9 725.5 622.0C724.2 631.2 723.4 639.5 722.5 649.4C721.7 659.2 721.8 667.6 720.6 676.7C719.4 685.9 717.3 693.1 715.7 700.2C714.1 707.2 712.5 713.0 711.8 715.8"/>
</g>
<g fill="none" stroke="#a9b6d0" stroke-width="0.9" stroke-linejoin="round" stroke-linecap="round">
<path d="M714.5 310.0C713.3 311.4 709.6 314.1 708.0 317.5C706.4 320.9 705.0 324.9 705.5 328.8C706.0 332.6 708.1 335.9 710.5 338.8C712.9 341.6 715.2 343.1 718.8 344.5C722.3 345.9 726.2 345.2 730.0 346.2C733.8 347.3 737.2 349.1 740.0 350.5C742.8 351.9 744.2 350.9 745.5 353.8C746.8 356.6 747.3 362.2 747.0 366.2C746.7 370.3 743.7 373.1 744.0 376.2C744.3 379.4 747.9 382.4 748.8 383.8"/>
<path d="M748.8 383.8C747.5 384.1 745.6 384.8 742.0 385.5C738.4 386.2 731.6 385.8 729.0 387.5C726.4 389.2 726.9 393.1 727.5 395.0C728.1 396.9 731.8 394.4 732.5 398.0C733.2 401.6 732.7 410.9 731.5 415.0C730.3 419.1 726.7 417.6 726.0 420.5C725.3 423.4 727.2 429.3 727.5 431.2"/>
<path d="M659.0 390.5C661.0 390.9 666.2 391.6 670.0 393.0C673.8 394.4 676.3 396.5 680.0 398.0C683.7 399.5 688.6 400.9 690.5 401.5"/>
<path d="M690.5 401.5C692.7 403.8 697.6 411.3 702.5 414.0C707.4 416.7 713.4 415.3 717.5 416.5C721.6 417.7 724.1 419.8 725.5 420.5"/>
<path d="M690.5 401.5C690.9 403.3 694.3 408.2 692.5 411.5C690.7 414.8 684.5 417.5 680.5 420.0C676.5 422.5 673.1 423.2 670.0 425.5C666.9 427.8 665.2 430.9 663.0 433.0C660.8 435.1 660.2 436.7 658.0 437.0C655.8 437.3 652.4 435.8 650.5 434.5C648.6 433.2 648.0 430.8 647.5 430.0"/>
<path d="M727.5 431.2C725.7 431.5 721.3 430.9 717.5 432.5C713.7 434.1 708.7 436.9 706.2 440.0C703.8 443.1 705.5 446.9 703.8 450.0C702.0 453.1 697.2 454.4 696.5 457.5C695.8 460.6 697.6 464.1 700.0 467.5C702.4 470.9 706.0 475.1 710.0 476.5C714.0 477.9 720.0 473.6 722.5 475.0C725.0 476.4 722.0 482.3 723.8 484.0C725.5 485.7 730.9 484.4 732.5 484.5"/>
<path d="M732.5 484.5C733.4 486.4 736.8 490.4 737.5 495.0C738.2 499.6 737.4 505.5 736.5 510.0C735.6 514.5 733.0 516.4 732.5 520.0C732.0 523.6 734.2 526.9 734.0 530.0C733.8 533.1 732.4 535.0 731.2 537.5C730.1 540.0 728.2 542.8 727.5 544.0"/>
<path d="M732.5 484.5C734.8 483.7 741.0 481.5 745.0 480.0C749.0 478.5 751.9 476.9 755.0 476.2C758.1 475.6 760.9 474.2 762.5 476.2C764.1 478.3 762.6 484.1 764.0 487.5C765.4 490.9 766.2 492.8 770.0 495.0C773.8 497.2 779.6 498.2 785.0 500.0C790.4 501.8 796.9 501.9 800.0 505.0C803.1 508.1 801.6 513.7 802.5 517.5C803.4 521.3 802.3 524.5 805.0 526.2C807.7 528.0 815.0 525.9 817.5 527.5C820.0 529.1 817.6 532.5 818.8 535.0C819.9 537.5 823.1 538.1 823.8 541.2C824.4 544.4 823.2 549.6 822.5 552.5C821.8 555.4 820.5 556.6 820.0 557.5"/>
<path d="M797.0 322.0C796.5 324.3 794.0 331.5 794.5 335.0C795.0 338.5 799.7 338.8 800.0 341.5C800.3 344.2 796.0 346.7 796.0 350.0C796.0 353.3 798.4 357.5 800.0 360.0C801.6 362.5 804.1 363.3 805.0 364.0"/>
<path d="M748.8 383.8C749.9 385.4 751.9 391.6 755.0 393.0C758.1 394.4 762.2 393.4 766.2 391.5C770.3 389.6 776.4 385.5 777.5 382.5C778.6 379.5 773.9 377.4 772.5 375.0C771.1 372.6 767.8 370.5 770.0 369.0C772.2 367.5 780.0 367.7 785.0 366.5C790.0 365.3 793.9 362.9 797.5 362.5C801.1 362.1 803.6 363.7 805.0 364.0"/>
<path d="M805.0 364.0C805.5 366.0 807.5 371.7 807.5 375.0C807.5 378.3 804.3 380.0 805.0 382.5C805.7 385.0 808.1 388.3 811.2 389.0C814.4 389.7 819.1 387.7 822.5 386.5C825.9 385.3 828.6 383.2 830.0 382.5"/>
<path d="M826.2 350.5C825.8 352.2 823.5 356.5 823.8 360.0C824.0 363.5 827.0 366.4 827.5 370.0C828.0 373.6 825.8 377.8 826.2 380.0C826.7 382.2 829.3 382.1 830.0 382.5"/>
<path d="M830.0 382.5C831.8 382.1 836.9 380.2 840.0 380.0C843.1 379.8 844.4 381.5 847.5 381.5C850.6 381.5 854.4 382.1 857.5 380.0C860.6 377.9 862.8 372.7 865.0 370.0C867.2 367.3 869.1 365.9 870.0 365.0"/>
<path d="M851.2 355.0C850.4 356.8 846.5 361.4 846.2 365.0C846.0 368.6 849.8 372.0 850.0 375.0C850.2 378.0 848.0 380.3 847.5 381.5"/>
<path d="M731.2 537.5C731.9 539.8 733.9 547.1 735.0 550.0C736.1 552.9 736.1 550.5 737.2 553.7C738.3 556.8 739.7 562.5 741.1 567.3C742.5 572.2 744.3 578.2 745.0 580.6"/>
<path d="M745.0 580.6C745.9 580.8 749.4 580.0 749.9 581.8C750.4 583.6 749.7 588.1 747.9 590.8C746.2 593.5 742.1 593.8 740.1 596.6C738.2 599.5 737.9 602.5 737.2 606.4C736.5 610.3 737.3 614.3 736.2 618.1C735.2 622.0 732.7 623.7 731.3 627.9C729.9 632.1 729.5 636.3 728.4 641.6C727.3 646.8 725.6 651.6 725.5 657.2C725.3 662.8 727.8 667.2 727.4 672.8C727.1 678.4 724.6 683.5 723.5 688.4C722.5 693.4 722.6 695.9 721.6 700.2C720.5 704.4 718.0 708.0 717.7 711.9C717.3 715.7 720.0 717.8 719.6 721.6C719.3 725.5 716.9 728.3 715.7 733.4C714.5 738.5 713.3 747.0 712.8 750.0"/>
<path d="M749.9 581.4C751.1 579.9 753.9 574.1 756.7 573.2C759.5 572.3 762.9 575.1 765.5 576.3C768.1 577.6 769.8 580.4 771.4 580.0C772.9 579.7 771.8 575.4 774.3 574.4C776.8 573.4 783.1 574.4 785.0 574.4"/>
<path d="M785.0 574.4C785.6 571.7 786.4 563.3 788.0 559.5C789.6 555.8 790.3 555.1 793.8 553.7C797.3 552.2 802.9 551.2 807.5 551.3C812.1 551.5 817.1 554.1 819.2 554.6"/>
<path d="M819.2 554.6C819.6 555.5 820.6 556.2 821.2 559.5C821.7 562.9 820.4 570.0 822.1 573.2C823.9 576.4 827.2 575.5 830.9 577.1C834.6 578.7 839.3 580.1 842.7 582.2C846.0 584.3 848.6 585.2 849.5 588.8C850.4 592.5 847.9 600.0 847.5 602.5"/>
<path d="M785.0 574.4C787.0 576.6 791.4 583.4 795.8 586.9C800.2 590.4 804.7 591.4 809.5 593.9C814.2 596.4 819.5 598.3 822.1 600.5C824.8 602.8 825.0 603.4 824.1 606.4C823.2 609.4 816.7 614.9 817.3 617.3C817.8 619.8 823.9 619.7 827.0 620.1C830.2 620.4 832.4 620.4 834.8 619.3C837.3 618.2 838.4 617.2 840.7 614.2C843.0 611.2 846.3 604.6 847.5 602.5"/>
<path d="M847.5 602.5C848.6 603.2 852.3 604.1 853.4 606.4C854.5 608.7 855.0 612.6 853.4 615.4C851.8 618.2 847.9 618.7 844.6 622.0C841.3 625.3 838.0 630.0 834.8 633.8C831.7 637.5 828.4 641.1 827.0 642.7"/>
<path d="M827.0 642.7C826.0 644.6 822.6 648.9 821.2 653.3C819.8 657.6 819.9 662.0 819.2 667.0C818.5 671.9 817.6 678.2 817.3 680.6"/>
<path d="M827.0 642.7C828.1 643.8 830.8 646.7 832.9 648.6C835.0 650.5 836.3 651.7 838.8 653.3C841.2 654.8 843.8 655.6 846.6 657.2C849.4 658.8 851.6 661.6 854.4 662.3C857.2 663.0 859.7 661.7 862.2 661.1C864.6 660.5 867.0 659.5 868.0 659.1"/>
<path d="M555.9 275.6C556.1 276.9 556.2 280.6 556.9 282.9C557.7 285.2 559.6 287.5 560.2 288.5"/>
<path d="M579.5 276.4C579.5 277.4 579.8 280.1 579.7 281.8C579.6 283.6 580.0 284.4 579.0 286.1C578.0 287.8 575.0 290.3 574.1 291.3"/>
<path d="M579.5 286.1C580.7 286.9 583.8 289.2 585.9 290.4C588.1 291.7 590.3 291.9 591.3 293.1C592.3 294.3 591.5 296.4 591.5 297.1"/>
<path d="M597.8 298.1C597.8 297.2 597.0 294.5 598.0 293.1C598.9 291.7 601.2 291.3 603.1 290.4C605.0 289.5 606.8 289.4 608.5 288.3C610.2 287.1 610.9 284.8 612.8 284.0C614.7 283.1 617.1 283.6 619.2 283.4C621.4 283.2 623.6 283.0 624.6 282.9"/>
<path d="M605.8 314.3C607.1 314.0 610.6 312.8 612.8 313.0C615.0 313.1 616.7 315.1 618.2 315.1C619.7 315.1 620.6 313.4 621.2 313.0"/>
<path d="M628.9 324.2C628.7 325.2 628.4 328.1 627.8 329.7C627.3 331.4 626.2 332.7 625.9 333.4"/>
<path d="M1174.5 275.5C1174.8 278.0 1175.4 285.2 1176.4 289.5C1177.5 293.8 1176.8 296.7 1180.3 299.3C1183.8 301.9 1192.1 302.4 1195.9 304.2C1199.8 305.9 1200.0 306.4 1201.8 309.1C1203.6 311.7 1204.6 315.3 1205.7 318.8C1206.8 322.3 1208.0 325.1 1207.7 328.6C1207.3 332.1 1204.1 334.8 1203.8 338.4C1203.4 341.9 1204.3 345.3 1205.7 348.1C1207.1 350.9 1210.7 350.9 1211.6 354.0C1212.4 357.0 1210.8 363.1 1210.6 365.1"/>
<path d="M1147.1 311.0C1149.6 310.0 1155.9 306.6 1160.8 305.2C1165.7 303.8 1170.9 304.3 1174.5 303.2C1178.0 302.1 1179.3 300.0 1180.3 299.3"/>
<path d="M1139.3 295.4C1141.1 295.0 1145.2 293.2 1149.1 293.0C1152.9 292.9 1158.7 294.3 1160.8 294.6"/>
<path d="M1167.6 322.7C1169.6 322.6 1175.0 321.1 1178.4 321.8C1181.7 322.5 1184.4 324.4 1186.2 326.6C1187.9 328.9 1189.2 331.1 1188.1 334.5C1187.1 337.8 1181.7 343.3 1180.3 345.2"/>
<path d="M1188.1 334.5C1189.5 334.8 1193.1 333.9 1195.9 336.4C1198.8 338.9 1202.3 346.0 1203.8 348.1"/>
<path d="M1205.7 318.8C1207.5 318.5 1211.6 316.9 1215.5 316.9C1219.3 316.9 1223.0 317.7 1227.2 318.8C1231.4 320.0 1235.3 322.7 1238.9 323.1C1242.5 323.5 1245.6 321.5 1247.1 321.2"/>
<path d="M1227.2 318.8C1227.2 317.1 1225.4 312.6 1227.2 309.1C1228.9 305.5 1233.4 302.5 1237.0 299.3C1240.5 296.1 1242.9 293.9 1246.7 291.5C1250.6 289.0 1254.2 287.0 1258.4 285.6C1262.7 284.2 1265.9 284.7 1270.2 283.7C1274.4 282.6 1277.0 281.2 1281.9 279.8C1286.8 278.3 1294.7 276.2 1297.5 275.5"/>
<path d="M1244.8 359.5C1244.5 357.4 1242.9 352.6 1243.2 348.1C1243.6 343.6 1245.7 338.0 1246.7 334.5C1247.7 330.9 1248.6 332.1 1248.7 328.6C1248.7 325.1 1243.6 317.5 1247.1 314.9C1250.6 312.3 1263.0 313.9 1268.2 314.1C1273.4 314.4 1274.6 316.1 1276.0 316.5"/>
<path d="M1277.0 353.0C1276.5 349.7 1275.1 339.6 1274.1 334.5C1273.0 329.4 1272.2 328.3 1271.1 324.7C1270.1 321.1 1268.7 316.4 1268.2 314.5"/>
<path d="M1281.9 350.1C1281.8 346.2 1282.2 334.0 1281.5 328.6C1280.8 323.2 1279.0 322.2 1278.0 320.0C1277.0 317.8 1274.6 318.5 1276.0 316.5C1277.4 314.5 1282.4 310.8 1285.8 309.1C1289.1 307.4 1293.0 307.5 1294.6 307.1"/>
<path d="M1289.7 349.7C1289.7 345.9 1288.6 333.8 1289.7 328.6C1290.7 323.4 1294.0 323.2 1295.5 320.8C1297.1 318.3 1298.7 317.4 1298.5 314.9C1298.3 312.5 1294.7 309.6 1294.6 307.1C1294.4 304.6 1297.0 302.3 1297.5 301.2"/>
<path d="M1270.2 283.7C1270.9 285.1 1271.2 289.4 1274.1 291.5C1276.9 293.6 1282.1 292.6 1285.8 295.4C1289.5 298.2 1293.0 305.0 1294.6 307.1"/>
<path d="M1297.5 301.2C1298.6 299.8 1300.2 295.2 1303.4 293.4C1306.5 291.7 1311.6 290.9 1315.1 291.5C1318.6 292.0 1319.4 295.5 1322.9 296.6C1326.4 297.6 1330.7 296.6 1334.6 297.3C1338.5 298.0 1340.9 300.8 1344.4 300.5C1347.9 300.1 1350.3 296.3 1354.1 295.4C1358.0 294.5 1362.3 295.9 1365.9 295.4C1369.4 294.9 1372.3 293.1 1373.7 292.7"/>
<path d="M1373.7 292.7C1375.1 294.2 1379.9 298.3 1381.5 301.2C1383.1 304.2 1383.7 306.2 1382.7 309.1C1381.6 311.9 1377.9 313.7 1375.6 316.9C1373.3 320.0 1372.2 322.8 1369.8 326.6C1367.3 330.5 1364.4 334.8 1362.0 338.4C1359.5 341.9 1358.7 344.9 1356.1 346.2C1353.5 347.4 1350.1 344.3 1347.5 345.4C1344.9 346.4 1343.6 350.1 1341.6 352.0C1339.7 353.9 1337.8 353.8 1336.6 355.9C1335.3 358.0 1335.0 362.3 1334.6 363.8"/>
<path d="M1373.7 292.7C1373.5 291.4 1371.6 288.7 1372.7 285.6C1373.8 282.5 1378.3 277.3 1379.5 275.5"/>
<path d="M1381.5 301.2C1382.2 302.7 1384.3 305.5 1385.4 309.1C1386.4 312.6 1388.4 318.1 1387.3 320.8C1386.3 323.5 1379.2 321.1 1379.5 323.9C1379.9 326.7 1387.7 333.2 1389.3 336.4C1390.9 339.6 1389.6 339.4 1388.5 341.5C1387.5 343.6 1384.0 345.5 1383.4 348.1C1382.9 350.7 1384.0 352.8 1385.4 355.9C1386.8 359.1 1389.5 361.5 1391.2 365.7C1393.0 369.9 1394.8 375.9 1395.2 379.4C1395.5 382.9 1393.6 384.2 1393.2 385.2"/>
<path d="M1388.5 341.5C1390.4 340.9 1394.4 340.0 1399.1 338.4C1403.8 336.7 1410.5 334.6 1414.7 332.5C1418.9 330.4 1419.0 329.1 1422.5 326.6C1426.0 324.2 1430.7 320.9 1434.2 318.8C1437.7 316.7 1440.6 315.6 1442.0 314.9"/>
<path d="M1442.0 314.9C1441.7 312.5 1440.1 305.8 1440.1 301.2C1440.1 296.7 1441.0 294.2 1442.0 289.5C1443.1 284.9 1445.2 278.0 1445.9 275.5"/>
<path d="M1442.0 314.9C1443.4 316.0 1447.7 318.0 1449.8 320.8C1452.0 323.6 1452.0 328.1 1453.8 330.5C1455.5 333.0 1457.1 331.6 1459.6 334.5C1462.1 337.3 1464.6 343.0 1467.4 346.2C1470.2 349.3 1473.1 349.6 1475.2 352.0C1477.3 354.5 1476.7 357.4 1479.1 359.8C1481.6 362.3 1485.4 365.0 1488.9 365.7C1492.4 366.4 1494.9 362.7 1498.7 363.8C1502.5 364.8 1508.0 370.2 1510.0 371.6"/>
<path d="M1393.2 385.2C1393.6 383.5 1392.4 377.9 1395.5 375.5C1398.7 373.0 1407.3 373.7 1410.8 371.6C1414.2 369.5 1412.6 365.6 1414.7 363.8C1416.8 361.9 1419.3 360.7 1422.5 361.0C1425.7 361.4 1428.8 364.6 1432.3 365.7C1435.8 366.8 1438.9 367.6 1442.0 366.9C1445.2 366.2 1446.7 362.9 1449.8 361.8C1453.0 360.7 1456.4 361.5 1459.6 361.0C1462.8 360.5 1463.9 359.3 1467.4 359.1C1470.9 358.9 1477.0 359.7 1479.1 359.8"/>
<path d="M1344.4 382.3C1346.5 382.2 1351.2 381.7 1356.1 381.7C1361.0 381.8 1365.4 382.0 1371.7 382.5C1378.0 383.0 1387.4 384.0 1391.2 384.5C1395.1 384.9 1392.9 385.1 1393.2 385.2"/>
<path d="M1356.1 382.3C1356.1 383.9 1358.4 389.4 1356.1 391.1C1353.8 392.7 1345.7 391.4 1343.4 391.5"/>
<path d="M1356.1 391.1C1358.6 391.1 1367.0 392.5 1369.8 391.1C1372.6 389.7 1371.4 384.7 1371.7 383.3"/>
<path d="M1371.7 383.3C1372.1 385.4 1371.9 392.5 1373.7 395.0C1375.4 397.5 1380.2 394.1 1381.5 397.0C1382.8 399.8 1381.8 407.1 1380.7 410.6C1379.6 414.1 1377.9 415.8 1375.6 416.5C1373.3 417.2 1370.6 414.2 1367.8 414.5C1365.0 414.9 1361.5 416.3 1360.0 418.4C1358.5 420.5 1360.3 423.9 1359.2 426.2C1358.2 428.6 1355.1 430.4 1354.1 431.3"/>
<path d="M1410.8 371.6C1410.4 374.4 1409.9 381.6 1408.8 387.2C1407.8 392.8 1407.0 397.9 1404.9 402.8C1402.8 407.7 1399.2 410.3 1397.1 414.5C1395.0 418.8 1395.3 422.7 1393.2 426.2C1391.1 429.8 1387.9 432.1 1385.4 434.1C1382.9 436.0 1382.0 436.8 1379.5 437.2C1377.1 437.5 1374.5 435.5 1371.7 436.0C1368.9 436.5 1365.3 439.2 1363.9 439.9"/>
<path d="M1364.9 444.8C1368.2 444.7 1377.6 444.2 1383.4 444.2C1389.2 444.3 1393.9 443.0 1397.1 445.0C1400.3 447.0 1399.3 452.6 1401.0 455.5C1402.8 458.5 1403.7 460.5 1406.9 461.4C1410.0 462.3 1416.1 462.0 1418.6 460.6C1421.1 459.2 1417.4 454.6 1420.5 453.6C1423.7 452.5 1433.0 451.2 1436.2 454.8C1439.3 458.3 1437.1 467.7 1438.1 473.1C1439.2 478.5 1439.2 482.5 1442.0 484.8C1444.8 487.2 1451.4 484.3 1453.8 486.0C1456.1 487.8 1454.6 492.1 1454.9 494.6C1455.3 497.1 1455.6 499.1 1455.7 500.1"/>
<path d="M1453.8 330.5C1455.2 328.6 1459.1 322.1 1461.6 320.0C1464.0 317.9 1464.6 317.8 1467.4 318.8C1470.2 319.9 1473.0 324.4 1477.2 325.9C1481.4 327.3 1486.6 327.9 1490.9 327.0C1495.1 326.2 1497.2 321.9 1500.6 321.2C1504.1 320.5 1508.3 322.8 1510.0 323.1"/>
<path d="M1450.0 321.2C1451.6 322.5 1456.3 328.9 1458.8 328.6C1461.2 328.2 1461.4 319.7 1463.7 319.2C1466.0 318.7 1468.1 325.2 1471.5 325.9C1474.8 326.6 1478.4 322.8 1482.2 323.1C1486.1 323.5 1488.6 327.8 1493.0 327.8C1497.4 327.8 1502.4 325.1 1506.6 323.1C1510.9 321.2 1514.2 319.9 1516.4 316.9C1518.6 313.9 1517.3 308.2 1518.8 306.3C1520.2 304.4 1523.3 304.8 1524.6 306.3C1525.9 307.9 1524.7 312.2 1525.8 314.9C1526.8 317.6 1529.6 320.0 1530.5 321.2"/>
<path d="M1530.5 321.2C1531.2 320.3 1533.0 319.0 1534.4 316.5C1535.7 314.0 1535.5 310.6 1537.9 307.1C1540.3 303.7 1545.5 300.9 1547.7 297.3C1549.8 293.8 1549.3 291.5 1550.0 287.6C1550.7 283.6 1551.3 277.6 1551.6 275.5"/>
<path d="M1550.0 287.6C1551.7 287.1 1555.6 285.0 1559.4 284.8C1563.2 284.7 1566.9 285.6 1571.1 286.8C1575.3 288.0 1579.3 289.2 1582.8 291.5C1586.3 293.7 1588.3 297.0 1590.6 299.3C1592.9 301.6 1595.2 302.1 1595.5 304.4C1595.9 306.7 1591.9 310.6 1592.6 312.2C1593.3 313.8 1598.2 313.1 1599.4 313.4"/>
<path d="M1530.5 321.2C1530.0 323.2 1529.0 329.5 1528.1 332.5C1527.2 335.5 1524.7 335.5 1525.4 337.6C1526.1 339.7 1529.6 341.6 1532.0 344.2C1534.5 346.8 1537.0 349.2 1539.1 352.0C1541.2 354.8 1542.6 357.9 1543.8 359.8C1544.9 361.8 1545.4 362.4 1545.7 363.0"/>
<path d="M1545.7 363.0C1547.5 364.0 1552.3 367.3 1555.5 368.8C1558.6 370.4 1559.8 371.1 1563.3 371.6C1566.8 372.1 1571.5 372.3 1575.0 371.6C1578.5 370.9 1580.0 368.1 1582.8 367.7C1585.6 367.2 1587.8 369.5 1590.6 368.8C1593.4 368.1 1594.9 365.2 1598.4 363.8C1602.0 362.3 1606.6 361.7 1610.2 361.0C1613.7 360.3 1612.7 364.1 1618.0 359.8C1623.2 355.6 1638.8 342.1 1639.5 337.6C1640.2 333.0 1627.5 336.1 1621.9 334.5C1616.2 332.8 1611.9 331.8 1608.2 328.6C1604.5 325.4 1603.1 319.6 1601.6 316.9C1600.0 314.1 1599.8 314.0 1599.4 313.4"/>
<path d="M1647.7 312.0C1647.7 315.0 1649.1 324.0 1647.7 328.6C1646.2 333.2 1640.9 336.0 1639.5 337.6"/>
<path d="M1590.6 368.8C1589.6 370.7 1586.1 372.9 1585.2 379.4C1584.2 385.8 1584.3 398.9 1585.2 404.8C1586.0 410.6 1588.8 410.5 1589.6 411.8"/>
<path d="M1545.7 363.0C1543.6 363.5 1536.4 364.5 1534.0 365.7C1531.5 366.9 1534.5 368.9 1532.0 369.6C1529.6 370.3 1524.5 369.3 1520.3 369.6C1516.1 370.0 1511.1 371.4 1508.6 371.6C1506.1 371.8 1508.8 372.2 1506.6 370.8C1504.5 369.4 1500.0 364.7 1496.9 363.8C1493.7 362.8 1492.2 366.5 1489.1 365.7C1485.9 364.9 1482.8 359.9 1479.3 359.1C1475.8 358.2 1473.4 360.5 1469.5 361.0C1465.7 361.5 1461.3 361.3 1457.8 361.8C1454.3 362.3 1451.4 363.4 1450.0 363.8"/>
<path d="M1532.0 369.6C1533.1 371.4 1536.8 376.2 1537.9 379.4C1538.9 382.5 1538.7 384.0 1537.9 387.2C1537.0 390.4 1534.4 393.4 1533.2 397.0C1532.0 400.5 1531.4 405.3 1531.1 407.1"/>
<path d="M1506.6 371.6C1507.0 373.3 1509.3 378.2 1508.6 381.3C1507.9 384.5 1504.6 386.0 1502.7 389.1C1500.8 392.3 1499.1 395.0 1498.0 398.9C1497.0 402.8 1497.8 407.1 1496.9 410.6C1496.0 414.1 1493.7 417.0 1493.0 418.4"/>
<path d="M1504.7 407.5C1509.4 407.5 1524.0 406.0 1531.1 407.5C1538.1 409.0 1538.7 412.7 1543.8 415.7C1548.8 418.7 1556.2 422.0 1559.4 424.3C1562.5 426.5 1558.5 426.1 1561.3 428.2C1564.1 430.3 1572.5 434.6 1575.0 436.0"/>
<path d="M1493.0 418.4C1493.7 417.0 1494.8 412.5 1496.9 410.6C1499.0 408.7 1502.7 406.8 1504.7 407.9C1506.7 408.9 1507.5 413.5 1507.8 416.5C1508.2 419.4 1507.9 421.5 1506.6 424.3C1505.4 427.1 1502.7 430.5 1500.8 432.1C1498.9 433.7 1497.3 434.3 1496.1 433.3C1494.9 432.2 1494.7 428.9 1494.1 426.2C1493.6 423.6 1493.2 419.8 1493.0 418.4"/>
<path d="M1496.1 433.3C1496.2 435.5 1495.7 441.4 1496.9 445.8C1498.1 450.1 1500.6 454.0 1502.7 457.5C1504.8 461.0 1506.1 463.2 1508.6 465.3C1511.1 467.4 1513.2 467.6 1516.4 469.2C1519.6 470.8 1523.4 473.2 1526.2 474.3C1529.0 475.4 1530.3 472.5 1532.0 475.1C1533.8 477.7 1532.4 486.1 1535.9 488.8C1539.5 491.4 1545.9 490.3 1551.6 489.9C1557.2 489.6 1561.9 488.2 1567.2 486.8C1572.5 485.4 1578.4 483.0 1580.9 482.1"/>
<path d="M1508.6 465.3C1506.8 465.0 1502.0 463.4 1498.8 463.4C1495.7 463.4 1492.9 463.6 1491.0 465.3C1489.1 467.1 1488.4 468.9 1488.3 473.1C1488.1 477.3 1489.5 484.5 1490.2 488.8C1490.9 493.0 1491.8 495.2 1492.2 496.6"/>
<path d="M1360.1 533.7C1361.6 533.6 1365.2 532.4 1368.7 532.9C1372.2 533.3 1371.7 535.5 1379.4 536.3C1387.1 537.1 1405.1 536.5 1411.6 537.1C1418.2 537.8 1412.5 539.0 1415.9 539.7C1419.4 540.5 1424.8 541.8 1431.0 541.4C1437.2 541.1 1444.9 538.8 1450.3 538.0C1455.7 537.2 1457.6 536.8 1461.1 537.1C1464.5 537.5 1468.1 539.6 1469.6 540.2"/>
<path d="M1440.6 480.0C1440.6 481.0 1438.2 484.6 1440.6 485.6C1443.1 486.6 1451.7 482.9 1454.2 485.6C1456.6 488.3 1456.8 497.8 1454.2 500.6C1451.6 503.4 1442.4 497.0 1439.6 501.1C1436.8 505.1 1438.3 517.5 1438.7 523.0C1439.1 528.5 1439.6 528.9 1441.7 531.6C1443.8 534.3 1448.8 536.8 1450.3 538.0"/>
<path d="M1431.0 543.6C1431.1 549.0 1432.7 568.3 1431.4 573.7C1430.1 579.1 1425.1 565.8 1423.7 573.7C1422.3 581.6 1423.9 607.7 1423.7 617.5C1423.4 627.3 1423.8 625.5 1422.4 628.2C1421.0 631.0 1419.0 631.9 1415.9 632.5C1412.8 633.2 1407.9 632.8 1405.2 631.7C1402.5 630.5 1402.2 626.3 1400.9 626.1C1399.6 625.9 1398.4 629.6 1397.9 630.4"/>
<path d="M1423.7 600.3C1424.6 601.5 1427.7 604.2 1428.8 606.8C1430.0 609.3 1429.0 613.1 1430.1 614.5C1431.3 615.9 1432.8 615.9 1435.3 614.5C1437.7 613.1 1441.7 608.9 1443.9 606.8C1446.0 604.6 1444.6 602.6 1447.3 602.5C1450.0 602.3 1455.3 605.9 1458.9 605.9C1462.5 605.9 1464.4 605.8 1467.5 602.5C1470.6 599.1 1473.4 591.1 1476.1 587.4C1478.8 583.8 1479.4 584.4 1482.5 582.3C1485.6 580.2 1488.0 576.8 1493.3 575.8C1498.5 574.8 1508.4 576.5 1511.8 576.7"/>
<path d="M1469.6 540.2C1470.8 542.5 1473.9 549.2 1476.1 553.0C1478.3 556.9 1480.1 558.7 1481.7 561.6C1483.2 564.6 1482.6 566.8 1484.7 569.4C1486.8 571.9 1491.7 574.7 1493.3 575.8"/>
<path d="M1469.6 540.2C1471.6 539.0 1476.5 536.2 1480.4 533.7C1484.3 531.2 1487.3 528.3 1491.1 526.4C1495.0 524.5 1499.6 524.5 1501.9 523.0C1504.2 521.4 1502.1 517.4 1504.0 517.8C1506.0 518.2 1509.1 523.0 1512.6 525.1C1516.1 527.2 1521.2 526.3 1523.4 529.4C1525.5 532.5 1524.8 538.1 1524.7 542.3C1524.5 546.6 1522.3 550.3 1522.5 553.0C1522.7 555.8 1526.1 554.3 1525.5 557.3C1524.9 560.4 1521.5 566.8 1519.1 570.2C1516.6 573.7 1512.3 573.6 1511.8 576.7C1511.2 579.8 1515.1 583.2 1516.1 587.4C1517.0 591.7 1516.4 596.6 1516.9 600.3C1517.5 604.0 1518.7 606.7 1519.1 608.0"/>
<path d="M1504.0 517.8C1506.3 516.8 1512.8 513.6 1516.9 512.2C1521.0 510.8 1525.6 511.6 1526.8 510.1C1528.0 508.5 1523.4 507.1 1523.4 503.6C1523.4 500.2 1526.0 495.0 1526.8 490.7C1527.6 486.5 1527.5 481.9 1527.7 480.0"/>
<path d="M1526.8 510.1C1528.1 510.9 1532.4 511.7 1534.1 514.4C1535.8 517.1 1535.1 521.6 1536.3 525.1C1537.4 528.6 1539.5 533.5 1540.5 533.7C1541.6 533.9 1540.8 529.1 1541.8 526.4C1542.8 523.7 1546.0 521.6 1546.1 518.7C1546.3 515.7 1544.2 512.0 1542.7 510.1C1541.2 508.1 1538.5 508.3 1537.5 507.9"/>
<path d="M1537.5 489.9C1539.6 489.7 1544.3 489.2 1549.1 488.6C1553.9 488.0 1558.4 487.8 1564.2 486.4C1570.0 485.1 1578.3 482.2 1581.4 481.3"/>
<path d="M1454.2 485.6C1455.8 486.4 1458.9 489.1 1463.2 489.9C1467.5 490.7 1473.4 488.7 1478.2 489.9C1483.1 491.0 1486.4 495.5 1490.3 496.3C1494.1 497.2 1499.7 496.4 1499.7 494.6C1499.7 492.8 1492.2 489.1 1490.3 486.4C1488.3 483.8 1489.2 481.2 1489.0 480.0"/>
<path d="M1507.2 608.9C1508.1 608.3 1510.4 605.8 1512.2 605.7C1514.0 605.6 1516.3 606.7 1517.3 608.5C1518.4 610.3 1518.6 613.8 1517.8 615.8C1516.9 617.7 1514.4 619.1 1512.6 619.2C1510.8 619.3 1508.9 618.1 1507.9 616.2C1506.9 614.4 1507.4 610.2 1507.2 608.9"/>
<path d="M1478.2 640.3C1479.4 639.1 1482.4 635.6 1484.7 633.8C1487.0 632.1 1489.0 629.9 1491.1 630.4C1493.3 630.9 1496.3 634.5 1496.7 636.8C1497.1 639.2 1495.4 641.1 1493.3 643.3C1491.1 645.4 1487.0 648.5 1484.7 648.9C1482.4 649.3 1481.6 647.0 1480.4 645.4C1479.2 643.9 1478.6 641.2 1478.2 640.3"/>
</g>
<defs><filter id="halo" filterUnits="userSpaceOnUse" x="135" y="260" width="1816" height="500"><feMorphology in="SourceAlpha" operator="dilate" radius="1.2" result="d"/><feGaussianBlur in="d" stdDeviation="0.55" result="b"/><feFlood flood-color="#fff" flood-opacity=".9"/><feComposite in2="b" operator="in" result="h"/><feMerge><feMergeNode in="h"/><feMergeNode in="SourceGraphic"/></feMerge></filter></defs>
<g class="mf" filter="url(#halo)"><text x="543.0" y="278.0" font-size="13" textLength="54.0" lengthAdjust="spacingAndGlyphs">Guatemala</text><text x="584.5" y="304.7" font-size="13" textLength="56.0" lengthAdjust="spacingAndGlyphs">Nicaragua</text><text x="626.2" y="332.7" font-size="13" textLength="44.5" lengthAdjust="spacingAndGlyphs">Panama</text><text x="725.5" y="341.5" font-size="16" textLength="69.0" lengthAdjust="spacingAndGlyphs">Venezuela</text><text x="671.7" y="377.2" font-size="16" textLength="63.8" lengthAdjust="spacingAndGlyphs">Colombia</text><text x="809.5" y="372.0" font-size="13" textLength="54.0" lengthAdjust="spacingAndGlyphs">Suriname</text><text x="634.9" y="409.7" font-size="16" textLength="55.0" lengthAdjust="spacingAndGlyphs">Ecuador</text><text x="670.9" y="479.5" font-size="16" textLength="32.0" lengthAdjust="spacingAndGlyphs">Peru</text><text x="850.5" y="475.2" font-size="16" textLength="39.5" lengthAdjust="spacingAndGlyphs">Brazil</text><text x="749.5" y="534.0" font-size="16" textLength="45.0" lengthAdjust="spacingAndGlyphs">Bolivia</text><text x="785.7" y="585.7" font-size="16" textLength="63.8" lengthAdjust="spacingAndGlyphs">Paraguay</text><text x="712.5" y="615.7" font-size="16" textLength="34.5" lengthAdjust="spacingAndGlyphs">Chile</text><text x="807.5" y="669.1" font-size="16" textLength="56.6" lengthAdjust="spacingAndGlyphs">Uruguay</text><text x="741.1" y="701.5" font-size="16" textLength="66.8" lengthAdjust="spacingAndGlyphs">Argentina</text><text x="1127.2" y="282.3" font-size="16" textLength="53.5" lengthAdjust="spacingAndGlyphs">Senegal</text><text x="1220.7" y="305.4" font-size="13" textLength="72.5" lengthAdjust="spacingAndGlyphs">Burkina Faso</text><text x="1164.9" y="316.7" font-size="13" textLength="37.3" lengthAdjust="spacingAndGlyphs">Guinea</text><text x="1243.2" y="347.3" font-size="13" textLength="34.0" lengthAdjust="spacingAndGlyphs">Ghana</text><text x="1328.8" y="363.6" font-size="16" textLength="69.5" lengthAdjust="spacingAndGlyphs">Cameroon</text><text x="1362.5" y="395.8" font-size="13" textLength="60.7" lengthAdjust="spacingAndGlyphs">Republic of</text><text x="1365.5" y="410.0" font-size="13" textLength="54.7" lengthAdjust="spacingAndGlyphs">the Congo</text><text x="1384.0" y="494.6" font-size="16" textLength="46.9" lengthAdjust="spacingAndGlyphs">Angola</text><text x="1396.1" y="280.0" font-size="16" textLength="34.0" lengthAdjust="spacingAndGlyphs">Chad</text><text x="1480.3" y="292.7" font-size="16" textLength="42.4" lengthAdjust="spacingAndGlyphs">Sudan</text><text x="1548.2" y="277.8" font-size="13" textLength="38.0" lengthAdjust="spacingAndGlyphs">Eritrea</text><text x="1548.2" y="333.7" font-size="16" textLength="54.1" lengthAdjust="spacingAndGlyphs">Ethiopia</text><text x="1541.4" y="396.2" font-size="16" textLength="40.8" lengthAdjust="spacingAndGlyphs">Kenya</text><text x="1508.6" y="448.9" font-size="16" textLength="59.6" lengthAdjust="spacingAndGlyphs">Tanzania</text><text x="1806.1" y="375.7" font-size="16" textLength="60.0" lengthAdjust="spacingAndGlyphs">Maldives</text><text x="1860.8" y="341.7" font-size="16" textLength="64.5" lengthAdjust="spacingAndGlyphs">Sri Lanka</text><text x="1456.1" y="509.8" font-size="16" textLength="50.0" lengthAdjust="spacingAndGlyphs">Zambia</text><text x="1465.8" y="551.7" font-size="16" textLength="70.0" lengthAdjust="spacingAndGlyphs">Zimbabwe</text><text x="1374.5" y="568.3" font-size="16" textLength="56.5" lengthAdjust="spacingAndGlyphs">Namibia</text><text x="1412.4" y="629.5" font-size="16" textLength="83.1" lengthAdjust="spacingAndGlyphs">South Africa</text><text x="1589.5" y="553.9" font-size="16" textLength="81.4" lengthAdjust="spacingAndGlyphs">Madagascar</text><text x="1690.5" y="560.1" font-size="13" textLength="52.4" lengthAdjust="spacingAndGlyphs">Mauritius</text></g>
</g></svg>
<div style="position:absolute;left:1951.0px;top:275.7px;width:26.0px;height:480.0px;background:#ffffff;"></div>
<div style="position:absolute;left:1962.0px;top:418.0px;width:4.6px;height:632.0px;background:#e3e4e8;border-radius:2.3px;"></div>
<svg style="left:140px;top:710px" width="120" height="34" viewBox="140 710 120 34"><circle cx="156.800" cy="727" r="11.700" fill="#fff" stroke="#7b94a9" stroke-width="2"/><path d="M151.300 732.800c-.600-4.300.500-8.300 3.300-10.600 3-2.400 7-2.100 9.200.5 2.200 2.700 1.700 6.600-1.300 8.800-2.800 2.100-6.900 2.300-11.200 1.300z" fill="#7b94a9"/><path d="M159 723.300l.9 2.300 2.300.9-2.300.9-.9 2.300-.9-2.300-2.300-.9 2.300-.9z" fill="#fff"/><text x="173.800" y="732.600" font-family="Liberation Sans,sans-serif" font-weight="700" font-size="22" fill="#fff" stroke="#7b94a9" stroke-width="2.600" paint-order="stroke" stroke-linejoin="round" textLength="76.500" lengthAdjust="spacingAndGlyphs">mapbox</text></svg>
<svg style="left:85.2px;top:228.5px" width="36" height="36" viewBox="-18.0 -18.0 36 36"><g fill="none" stroke="#a1a4b3" stroke-width="1.15" stroke-linecap="round" stroke-linejoin="round"><circle r="13.700"/><path d="M-8.500 -3.200A9.100 9.100 0 0 1 8.400 -2.600"/><circle cx="-0.200" cy="4.700" r="2.900"/><path d="M-1.900 2.400L-5.400 -2.300"/></g></svg>
<svg style="left:85.1px;top:289.0px" width="36" height="36" viewBox="-18.0 -18.0 36 36"><g fill="none" stroke="#a1a4b3" stroke-width="1.15" stroke-linecap="round" stroke-linejoin="round"><rect x="-12.700" y="-0.600" width="6.100" height="9.200" rx=".8"/><rect x="-3.300" y="-15" width="6.700" height="23.600" rx=".8"/><rect x="6.400" y="-6.500" width="6.800" height="15.100" rx=".8"/><path d="M-13.100 11.800H13.500"/></g></svg>
<svg style="left:85.1px;top:347.0px" width="36" height="36" viewBox="-18.0 -18.0 36 36"><g fill="none" stroke="#a1a4b3" stroke-width="1.15" stroke-linecap="round" stroke-linejoin="round"><path d="M0 8.600C-5.800 2.800 -10.200 -0.400 -10.200 -4.800A10.200 10.200 0 0 1 10.200 -4.800C10.200 -0.400 5.800 2.800 0 8.600Z"/><circle cx="0" cy="-4.600" r="4.500"/><path d="M-8.300 0.900H-10.700L-13.400 12.400H13.400L10.700 0.900H8.300"/></g></svg>
<svg style="left:85.1px;top:404.6px" width="36" height="36" viewBox="-18.0 -18.0 36 36"><g fill="none" stroke="#a1a4b3" stroke-width="1.15" stroke-linecap="round" stroke-linejoin="round"><circle r="13.600"/><circle r="5.300"/></g></svg>
<svg style="left:85.1px;top:465.7px" width="36" height="36" viewBox="-18.0 -18.0 36 36"><g fill="none" stroke="#a1a4b3" stroke-width="1.15" stroke-linecap="round" stroke-linejoin="round"><path d="M-10.800 8.500V-9.200a2 2 0 0 1 2-2H11.500a2 2 0 0 1 2 2v1.700"/><path d="M-13.800 8.800H0.500v1.300a1.400 1.400 0 0 1-1.400 1.400H-12.400a1.400 1.400 0 0 1-1.400-1.400z"/><rect x="1.300" y="-2.300" width="7.200" height="13.800" rx="1.400"/><path d="M9.800 -5.600H12a1.400 1.400 0 0 1 1.400 1.400V10.100a1.400 1.400 0 0 1-1.400 1.400H10.600"/></g></svg>
<svg style="left:85.9px;top:518.8px" width="36" height="36" viewBox="-18.0 -18.0 36 36"><g fill="none" stroke="#a1a4b3" stroke-width="1.15" stroke-linecap="round" stroke-linejoin="round"><path d="M-4.300 10.600A11.500 11.500 0 1 1 4.300 10.600"/><path d="M-4.600 10.700H4.600"/><path d="M-4.400 13.600H4.400"/><path d="M-7.200 -1.500A7.600 7.600 0 0 1 -1.200 -7.300"/></g></svg>
<div style="position:absolute;left:88.0px;top:588.0px;width:30.0px;height:1.2px;background:#e3e4e9;"></div>
<svg style="left:85.1px;top:615.5px" width="36" height="36" viewBox="-18.0 -18.0 36 36"><g fill="none" stroke="#2f80f6" stroke-width="1.35" stroke-linecap="round" stroke-linejoin="round"><path d="M0 -13.200C-3.800 -10.800 -8.600 -9.800 -12.800 -10V-1.500C-12.800 5.800 -6.800 10.800 0 13.400C6.800 10.800 12.800 5.800 12.800 -1.500V-10C8.600 -9.800 3.800 -10.800 0 -13.200Z"/><path d="M-12.300 -9.500L7.500 8.200"/></g></svg>
<svg style="left:85.0px;top:1111.5px" width="36" height="36" viewBox="-18.0 -18.0 36 36"><g fill="none" stroke="#a1a4b3" stroke-width="1.15" stroke-linecap="round" stroke-linejoin="round"><rect x="-13.500" y="-13" width="27" height="25.200" rx="2.600"/><path d="M-13.500 -6.800H13.500"/><rect x="-7.700" y="-15.200" width="1.800" height="4.200" rx=".9" fill="#f4f5f6"/><rect x="5.900" y="-15.200" width="1.800" height="4.200" rx=".9" fill="#f4f5f6"/><path d="M0 -2V6.600M-3.800 0.200L3.800 4.600M3.800 0.200L-3.800 4.600"/></g></svg>
<svg style="left:85.0px;top:1169.0px" width="36" height="36" viewBox="-18.0 -18.0 36 36"><g fill="none" stroke="#a1a4b3" stroke-width="1.15" stroke-linecap="round" stroke-linejoin="round"><path d="M-12.500 8.500C-9.500 6.500 -9.800 1 -9.800 -3.500A9.800 9.800 0 0 1 9.800 -3.500C9.800 1 9.500 6.500 12.500 8.500Z"/><path d="M-3.200 11.300A3.300 3.300 0 0 0 3.200 11.300"/></g></svg>
<svg style="left:85.0px;top:1228.0px" width="36" height="36" viewBox="-18.0 -18.0 36 36"><g fill="none" stroke="#a1a4b3" stroke-width="1.15" stroke-linecap="round" stroke-linejoin="round"><path d="M-13.500 13.200V0A13.500 13.500 0 1 1 0 13.200Z"/><circle cx="-7.100" cy="0.500" r="1.750" fill="#9396a6" stroke="none"/><circle cx="0" cy="0.500" r="1.750" fill="#9396a6" stroke="none"/><circle cx="7.100" cy="0.500" r="1.750" fill="#9396a6" stroke="none"/></g></svg>
<svg style="left:85.0px;top:1286.0px" width="36" height="36" viewBox="-18.0 -18.0 36 36"><g fill="none" stroke="#a1a4b3" stroke-width="1.15" stroke-linecap="round" stroke-linejoin="round"><path d="M-2.57 -10.70L-2.17 -13.73L2.17 -13.73L2.57 -10.70L5.75 -9.38L8.17 -11.25L11.25 -8.17L9.38 -5.75L10.70 -2.57L13.73 -2.17L13.73 2.17L10.70 2.57L9.38 5.75L11.25 8.17L8.17 11.25L5.75 9.38L2.57 10.70L2.17 13.73L-2.17 13.73L-2.57 10.70L-5.75 9.38L-8.17 11.25L-11.25 8.17L-9.38 5.75L-10.70 2.57L-13.73 2.17L-13.73 -2.17L-10.70 -2.57L-9.38 -5.75L-11.25 -8.17L-8.17 -11.25L-5.75 -9.38Z"/><circle r="6.500"/></g></svg>
<span class="t" style="left:207.5px;top:803.5px;font-size:16px;color:#33353f;font-weight:700;letter-spacing:-0.891px;">Total Threats By Severity</span>
<div style="position:absolute;left:207.5px;top:840.6px;width:408.7px;height:1.3px;background:#e7e8ec;"></div>
<svg style="left:0;top:0" width="2048" height="1443" viewBox="0 0 2048 1443"><circle cx="302.9" cy="957.7" r="87.25" stroke="#f5a623" stroke-width="12.9" fill="none"/><path d="M296.97 870.65A87.25 87.25 0 0 1 319.40 872.02" stroke="#f0383b" stroke-width="12.9" fill="none"/></svg>
<span class="t" style="left:267.6px;top:926.8px;font-size:44px;color:#2b2d3a;font-weight:700;letter-spacing:-0.506px;">106</span>
<span class="t" style="left:264.2px;top:977.0px;font-size:15px;color:#7e8190;letter-spacing:-0.376px;">Total threats</span>
<div style="position:absolute;left:474.5px;top:906.0px;width:10.0px;height:10.0px;background:#f0383b;border-radius:50%;"></div>
<span class="t" style="left:489.7px;top:904.0px;font-size:15.6px;color:#3c3e48;letter-spacing:-0.428px;">High</span>
<span class="t" style="left:605.2px;top:903.3px;font-size:16.4px;color:#2b2d3a;font-weight:700;">2</span>
<div style="position:absolute;left:474.5px;top:953.2px;width:10.0px;height:10.0px;background:#f5a623;border-radius:50%;"></div>
<span class="t" style="left:489.7px;top:951.2px;font-size:15.6px;color:#3c3e48;letter-spacing:-0.217px;">Medium</span>
<span class="t" style="left:586.9px;top:950.5px;font-size:16.4px;color:#2b2d3a;font-weight:700;">104</span>
<div style="position:absolute;left:474.5px;top:1000.4px;width:10.0px;height:10.0px;background:#dbdce3;border-radius:50%;"></div>
<span class="t" style="left:489.7px;top:998.3px;font-size:15.6px;color:#3c3e48;letter-spacing:-0.809px;">Low</span>
<span class="t" style="left:605.2px;top:997.6px;font-size:16.4px;color:#2b2d3a;font-weight:700;">0</span>
<div style="position:absolute;left:474.4px;top:934.0px;width:141.8px;height:1.3px;background:#e7e8ec;"></div>
<div style="position:absolute;left:474.4px;top:981.1px;width:141.8px;height:1.3px;background:#e7e8ec;"></div>
<span class="t" style="left:658.9px;top:802.2px;font-size:16px;color:#33353f;font-weight:700;letter-spacing:-0.467px;">Top Threats By Geo</span>
<span class="t" style="left:875.3px;top:802.5px;font-size:15.6px;color:#33353f;letter-spacing:0.835px;">Attempts</span>
<svg style="left:952.800px;top:806.800px" width="11" height="8" viewBox="0 0 11 8"><path d="M1 6.800l4.500-4.800 4.500 4.800" stroke="#1a76f5" stroke-width="1.500" fill="none"/></svg>
<span class="t" style="left:1015.5px;top:802.5px;font-size:15.6px;color:#33353f;letter-spacing:0.393px;">Severity</span>
<span class="t" style="left:1147.7px;top:802.5px;font-size:15.6px;color:#33353f;letter-spacing:-0.106px;">Source</span>
<div style="position:absolute;left:649.4px;top:840.6px;width:629.2px;height:1.3px;background:#e7e8ec;"></div>
<div style="position:absolute;left:649.4px;top:885.5px;width:629.2px;height:1.3px;background:#e7e8ec;"></div>
<div style="position:absolute;left:649.4px;top:929.6px;width:629.2px;height:1.3px;background:#e7e8ec;"></div>
<div style="position:absolute;left:649.4px;top:979.8px;width:629.2px;height:1.3px;background:#e7e8ec;"></div>
<div style="position:absolute;left:649.4px;top:1023.9px;width:629.2px;height:1.3px;background:#e7e8ec;"></div>
<div style="position:absolute;left:649.4px;top:1068.6px;width:629.2px;height:1.3px;background:#e7e8ec;"></div>
<span class="t" style="left:699.6px;top:856.6px;font-size:15.6px;color:#3c3e48;letter-spacing:-0.540px;">China</span>
<span class="t" style="left:875.3px;top:856.6px;font-size:15.6px;color:#3c3e48;">41</span>
<div style="position:absolute;left:1015.6px;top:859.3px;width:10.0px;height:10.0px;background:#f0383b;border-radius:50%;"></div>
<span class="t" style="left:1030.5px;top:856.6px;font-size:15.6px;color:#3c3e48;letter-spacing:-0.428px;">High</span>
<span class="t" style="left:1147.7px;top:856.6px;font-size:15.6px;color:#3c3e48;letter-spacing:0.292px;">Multiple</span>
<span class="t" style="left:699.6px;top:901.0px;font-size:15.6px;color:#3c3e48;letter-spacing:-0.473px;">South Korea</span>
<span class="t" style="left:875.3px;top:901.0px;font-size:15.6px;color:#3c3e48;">23</span>
<div style="position:absolute;left:1015.6px;top:903.7px;width:10.0px;height:10.0px;background:#f5a623;border-radius:50%;"></div>
<span class="t" style="left:1030.5px;top:901.0px;font-size:15.6px;color:#3c3e48;letter-spacing:-0.097px;">Medium</span>
<span class="t" style="left:1147.7px;top:901.0px;font-size:15.6px;color:#3c3e48;letter-spacing:0.292px;">Multiple</span>
<span class="t" style="left:875.3px;top:948.1px;font-size:15.6px;color:#3c3e48;">18</span>
<div style="position:absolute;left:1015.6px;top:950.8px;width:10.0px;height:10.0px;background:#f5a623;border-radius:50%;"></div>
<span class="t" style="left:1030.5px;top:948.1px;font-size:15.6px;color:#3c3e48;letter-spacing:-0.097px;">Medium</span>
<span class="t" style="left:1147.7px;top:948.1px;font-size:15.6px;color:#3c3e48;letter-spacing:-0.190px;">92.63.194.90</span>
<span class="t" style="left:699.6px;top:995.0px;font-size:15.6px;color:#3c3e48;letter-spacing:-0.328px;">Finland</span>
<span class="t" style="left:875.3px;top:995.0px;font-size:15.6px;color:#3c3e48;">7</span>
<div style="position:absolute;left:1015.6px;top:997.7px;width:10.0px;height:10.0px;background:#f5a623;border-radius:50%;"></div>
<span class="t" style="left:1030.5px;top:995.0px;font-size:15.6px;color:#3c3e48;letter-spacing:-0.097px;">Medium</span>
<span class="t" style="left:1147.7px;top:995.0px;font-size:15.6px;color:#3c3e48;letter-spacing:0.292px;">Multiple</span>
<span class="t" style="left:699.6px;top:1039.8px;font-size:15.6px;color:#3c3e48;letter-spacing:-0.288px;">United States</span>
<span class="t" style="left:875.3px;top:1039.8px;font-size:15.6px;color:#3c3e48;">6</span>
<div style="position:absolute;left:1015.6px;top:1042.5px;width:10.0px;height:10.0px;background:#f5a623;border-radius:50%;"></div>
<span class="t" style="left:1030.5px;top:1039.8px;font-size:15.6px;color:#3c3e48;letter-spacing:-0.097px;">Medium</span>
<span class="t" style="left:1147.7px;top:1039.8px;font-size:15.6px;color:#3c3e48;letter-spacing:0.292px;">Multiple</span>
<span class="t" style="left:699.6px;top:936.4px;font-size:15.6px;color:#3c3e48;letter-spacing:-0.860px;">Russian</span>
<span class="t" style="left:699.6px;top:960.6px;font-size:15.6px;color:#3c3e48;letter-spacing:-0.242px;">Federation</span>
<svg style="left:660.6px;top:854.1px" width="27.4" height="19.8" viewBox="0 0 27.400 19.800"><rect width="27.400" height="19.800" fill="#e1261c"/><path d="M5.200 2.300l.8 2.400h2.500l-2 1.500.8 2.400-2.100-1.500-2.100 1.500.8-2.400-2-1.500h2.500z" fill="#ffde00"/><circle cx="10" cy="2.300" r=".7" fill="#ffde00"/><circle cx="11.700" cy="4.200" r=".7" fill="#ffde00"/><circle cx="11.700" cy="6.800" r=".7" fill="#ffde00"/><circle cx="10" cy="8.700" r=".7" fill="#ffde00"/></svg>
<svg style="left:660.6px;top:898.3px" width="27.4" height="19.8" viewBox="0 0 27.400 19.800"><rect width="27.400" height="19.800" fill="#fff"/><path d="M7.800 9.900a5.900 5.900 0 0 1 11.800 0z" fill="#cd2e3a" transform="rotate(33 13.700 9.900)"/><path d="M7.800 9.900a5.900 5.900 0 0 0 11.800 0z" fill="#0047a0" transform="rotate(33 13.700 9.900)"/><circle cx="11.200" cy="8.300" r="2.950" fill="#cd2e3a"/><circle cx="16.200" cy="11.500" r="2.950" fill="#0047a0"/><g stroke="#222" stroke-width="1.100"><path d="M3.400 5.200l3-4M4.800 6.200l3-4M2 4.200l3-4" transform="translate(.8 1.200)"/><path d="M19.800 2.400l3 4M21.200 1.400l3 4M18.400 3.400l3 4" transform="translate(-.4 .4)"/><path d="M3.400 14.600l3 4M4.800 13.600l3 4M2 15.600l3 4" transform="translate(.8 -1.400)"/><path d="M19.800 17.400l3-4M21.200 18.400l3-4M18.400 16.400l3-4" transform="translate(-.4 -.600)"/></g></svg>
<svg style="left:660.6px;top:945.7px" width="27.4" height="19.8" viewBox="0 0 27.400 19.800"><rect width="27.400" height="6.600" fill="#fff"/><rect y="6.600" width="27.400" height="6.600" fill="#1c3fb4"/><rect y="13.200" width="27.400" height="6.600" fill="#e02c2c"/></svg>
<svg style="left:660.6px;top:992.4px" width="27.4" height="19.8" viewBox="0 0 27.400 19.800"><rect width="27.400" height="19.800" fill="#fff"/><rect x="7.200" width="5.600" height="19.800" fill="#0f3a8c"/><rect y="7.200" width="27.400" height="5.400" fill="#0f3a8c"/></svg>
<svg style="left:660.6px;top:1037.1px" width="29" height="19.8" viewBox="0 0 29 19.800"><rect width="29" height="19.800" fill="#fff"/><rect y="0.00" width="29" height="1.52" fill="#d24a5c"/><rect y="3.05" width="29" height="1.52" fill="#d24a5c"/><rect y="6.09" width="29" height="1.52" fill="#d24a5c"/><rect y="9.14" width="29" height="1.52" fill="#d24a5c"/><rect y="12.18" width="29" height="1.52" fill="#d24a5c"/><rect y="15.23" width="29" height="1.52" fill="#d24a5c"/><rect y="18.28" width="29" height="1.52" fill="#d24a5c"/><rect width="13.400" height="10.700" fill="#56639d"/></svg>
<span class="t" style="left:1290.2px;top:802.2px;font-size:16px;color:#33353f;font-weight:700;letter-spacing:-0.348px;">Top Threats By Classification</span>
<span class="t" style="left:1595.8px;top:802.5px;font-size:15.6px;color:#33353f;letter-spacing:0.721px;">Attempts</span>
<svg style="left:1674.600px;top:806.800px" width="11" height="8" viewBox="0 0 11 8"><path d="M1 6.800l4.500-4.800 4.500 4.800" stroke="#1a76f5" stroke-width="1.500" fill="none"/></svg>
<span class="t" style="left:1746.2px;top:802.5px;font-size:15.6px;color:#33353f;letter-spacing:0.350px;">Severity</span>
<div style="position:absolute;left:1279.3px;top:840.6px;width:599.1px;height:1.3px;background:#e7e8ec;"></div>
<div style="position:absolute;left:1279.3px;top:885.5px;width:599.1px;height:1.3px;background:#e7e8ec;"></div>
<div style="position:absolute;left:1279.3px;top:929.6px;width:599.1px;height:1.3px;background:#e7e8ec;"></div>
<div style="position:absolute;left:1279.3px;top:974.6px;width:599.1px;height:1.3px;background:#e7e8ec;"></div>
<div style="position:absolute;left:1279.3px;top:1019.5px;width:599.1px;height:1.3px;background:#e7e8ec;"></div>
<span class="t" style="left:1290.2px;top:856.2px;font-size:15.6px;color:#4f515e;letter-spacing:-0.940px;">Spamhaus</span>
<span class="t" style="left:1595.8px;top:856.2px;font-size:15.6px;color:#3c3e48;">83</span>
<div style="position:absolute;left:1746.3px;top:858.9px;width:10.0px;height:10.0px;background:#f5a623;border-radius:50%;"></div>
<span class="t" style="left:1761.5px;top:856.2px;font-size:15.6px;color:#3c3e48;letter-spacing:-0.097px;">Medium</span>
<span class="t" style="left:1290.2px;top:900.6px;font-size:15.6px;color:#4f515e;letter-spacing:-0.238px;">Dshield</span>
<span class="t" style="left:1595.8px;top:900.6px;font-size:15.6px;color:#3c3e48;">21</span>
<div style="position:absolute;left:1746.3px;top:903.3px;width:10.0px;height:10.0px;background:#f5a623;border-radius:50%;"></div>
<span class="t" style="left:1761.5px;top:900.6px;font-size:15.6px;color:#3c3e48;letter-spacing:-0.097px;">Medium</span>
<span class="t" style="left:1290.2px;top:945.0px;font-size:15.6px;color:#4f515e;letter-spacing:-0.490px;">Shellcode</span>
<span class="t" style="left:1595.8px;top:945.0px;font-size:15.6px;color:#3c3e48;">1</span>
<div style="position:absolute;left:1746.3px;top:947.7px;width:10.0px;height:10.0px;background:#f0383b;border-radius:50%;"></div>
<span class="t" style="left:1761.5px;top:945.0px;font-size:15.6px;color:#3c3e48;letter-spacing:-0.428px;">High</span>
<span class="t" style="left:1290.2px;top:989.5px;font-size:15.6px;color:#4f515e;letter-spacing:-0.073px;">Unknown</span>
<span class="t" style="left:1595.8px;top:989.5px;font-size:15.6px;color:#3c3e48;">1</span>
<div style="position:absolute;left:1746.3px;top:992.2px;width:10.0px;height:10.0px;background:#f0383b;border-radius:50%;"></div>
<span class="t" style="left:1761.5px;top:989.5px;font-size:15.6px;color:#3c3e48;letter-spacing:-0.428px;">High</span>
<span class="t" style="left:173.2px;top:1110.8px;font-size:16px;color:#33353f;font-weight:700;letter-spacing:-0.708px;">High-severity threats</span>
<span class="t" style="left:173.2px;top:1338.2px;font-size:16px;color:#33353f;font-weight:700;letter-spacing:-0.639px;">Medium-severity threats</span>
<span class="t" style="left:1662.8px;top:1134.8px;font-size:15.6px;color:#3c3e48;letter-spacing:-0.173px;">Severity:</span>
<div style="position:absolute;left:1731.0px;top:1138.0px;width:10.0px;height:10.0px;background:#dbdce3;border-radius:50%;"></div>
<span class="t" style="left:1746.0px;top:1134.8px;font-size:15.6px;color:#3c3e48;letter-spacing:-0.809px;">Low</span>
<div style="position:absolute;left:1781.8px;top:1138.0px;width:10.0px;height:10.0px;background:#f5a623;border-radius:50%;"></div>
<span class="t" style="left:1798.0px;top:1134.8px;font-size:15.6px;color:#3c3e48;letter-spacing:-0.137px;">Medium</span>
<div style="position:absolute;left:1862.2px;top:1138.0px;width:10.0px;height:10.0px;background:#f0383b;border-radius:50%;"></div>
<span class="t" style="left:1877.0px;top:1134.8px;font-size:15.6px;color:#3c3e48;letter-spacing:-0.161px;">High</span>
<svg style="left:0;top:0" width="2048" height="1443" viewBox="0 0 2048 1443"><defs><linearGradient id="rg" x1="0" y1="0" x2="0" y2="1"><stop offset="0" stop-color="#f0383b" stop-opacity=".36"/><stop offset="1" stop-color="#f0383b" stop-opacity=".02"/></linearGradient></defs><path d="M173.2 1167.7H1913.3" stroke="#e9eaee" stroke-width="1.200"/><path d="M173.20 1167.7V1294.9M211.87 1167.7V1294.9M250.54 1167.7V1294.9M289.21 1167.7V1294.9M327.88 1167.7V1294.9M366.54 1167.7V1294.9M405.21 1167.7V1294.9M443.88 1167.7V1294.9M482.55 1167.7V1294.9M521.22 1167.7V1294.9M559.89 1167.7V1294.9M598.56 1167.7V1294.9M637.23 1167.7V1294.9M675.90 1167.7V1294.9M714.56 1167.7V1294.9M753.23 1167.7V1294.9M791.90 1167.7V1294.9M830.57 1167.7V1294.9M869.24 1167.7V1294.9M907.91 1167.7V1294.9M946.58 1167.7V1294.9M985.25 1167.7V1294.9M1023.92 1167.7V1294.9M1062.58 1167.7V1294.9M1101.25 1167.7V1294.9M1139.92 1167.7V1294.9M1178.59 1167.7V1294.9M1217.26 1167.7V1294.9M1255.93 1167.7V1294.9M1294.60 1167.7V1294.9M1333.27 1167.7V1294.9M1371.94 1167.7V1294.9M1410.60 1167.7V1294.9M1449.27 1167.7V1294.9M1487.94 1167.7V1294.9M1526.61 1167.7V1294.9M1565.28 1167.7V1294.9M1603.95 1167.7V1294.9M1642.62 1167.7V1294.9M1681.29 1167.7V1294.9M1719.96 1167.7V1294.9M1758.62 1167.7V1294.9M1797.29 1167.7V1294.9M1835.96 1167.7V1294.9M1874.63 1167.7V1294.9M1913.30 1167.7V1294.9" stroke="#eaebee" stroke-width="1.200" fill="none"/><path d="M173.2 1294.9L1178.59 1294.9C1195.99 1294.9 1201.02 1179.5 1217.26 1179.5C1233.50 1179.5 1238.53 1294.9 1255.93 1294.9L1410.60 1294.9C1428.01 1294.9 1433.03 1179.5 1449.27 1179.5C1465.51 1179.5 1470.54 1294.9 1487.94 1294.9L1913.3 1294.9Z" fill="url(#rg)"/><path d="M173.2 1294.9L1178.59 1294.9C1195.99 1294.9 1201.02 1179.5 1217.26 1179.5C1233.50 1179.5 1238.53 1294.9 1255.93 1294.9L1410.60 1294.9C1428.01 1294.9 1433.03 1179.5 1449.27 1179.5C1465.51 1179.5 1470.54 1294.9 1487.94 1294.9L1913.3 1294.9" stroke="#f0383b" stroke-width="1.300" fill="none"/></svg>
</div></div>
</body></html>
